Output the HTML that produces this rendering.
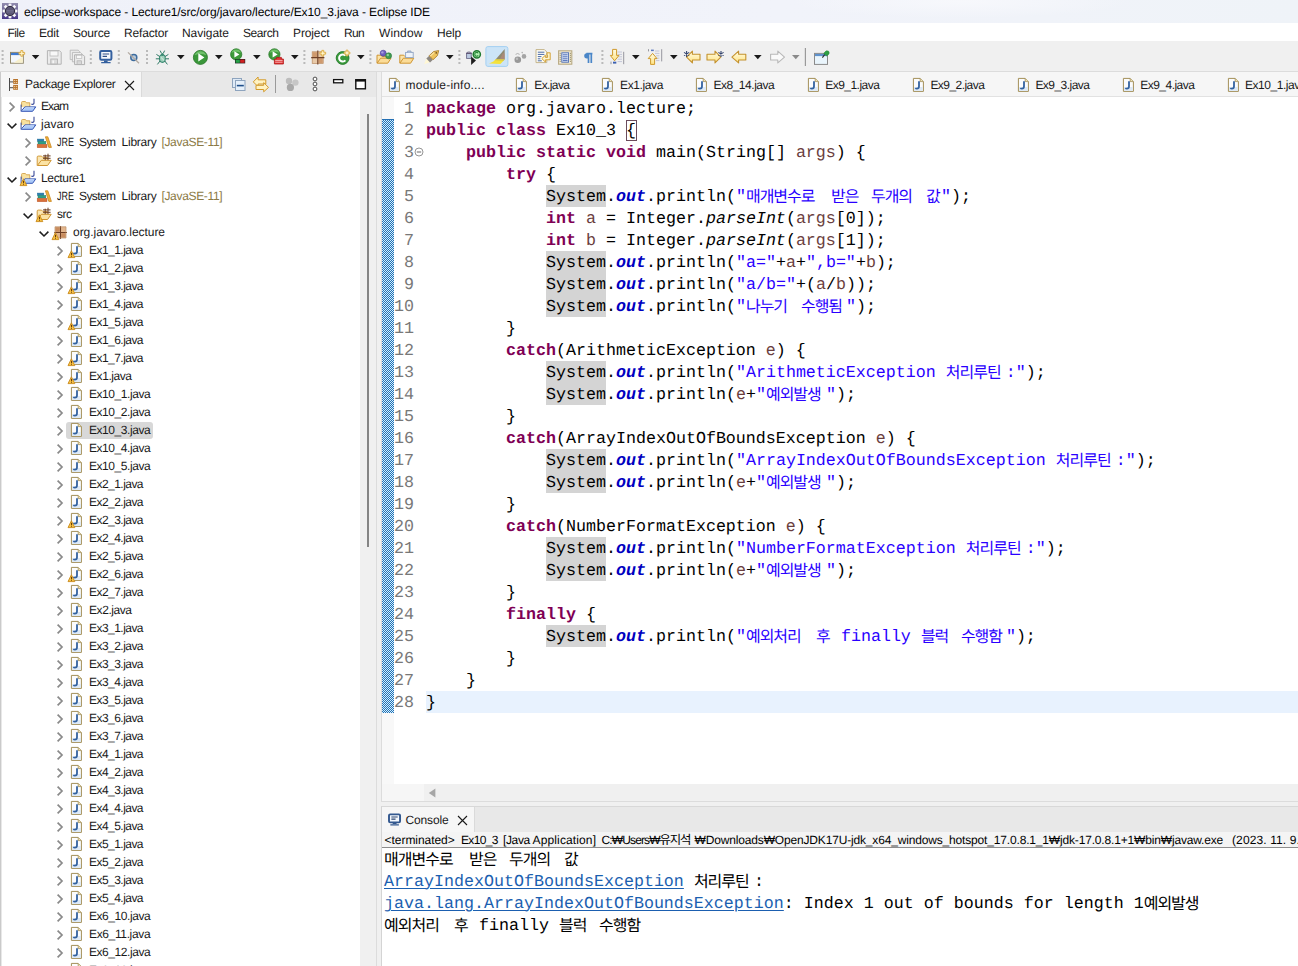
<!DOCTYPE html><html lang="ko"><head><meta charset="utf-8"><title>eclipse-workspace - Lecture1/src/org/javaro/lecture/Ex10_3.java - Eclipse IDE</title><style>
*{box-sizing:border-box}
html,body{margin:0;padding:0}
body{width:1298px;height:966px;overflow:hidden;position:relative;background:#f0f0f0;font-family:"Liberation Sans",sans-serif;font-size:12px;color:#1a1a1a;text-rendering:geometricPrecision}
.abs{position:absolute}
.t{position:absolute;white-space:pre;line-height:16px;height:16px}
#title{left:0;top:0;width:1298px;height:23px;background:radial-gradient(ellipse 170px 16px at 960px 2px,#f7f8fc 0,rgba(247,248,252,0) 100%),linear-gradient(90deg,#eff1f9 0,#f1f3fa 60%,#eff3f8 100%)}
#menu{left:0;top:23px;width:1298px;height:18px;background:#fff}
#tool{left:0;top:41px;width:1298px;height:30px;background:#f0f0f0}
#tree{left:2px;top:97px;width:358px;height:869px;background:#fff;overflow:hidden}
.row{position:absolute;left:0;height:18px;width:358px}
.row .t{top:1px}
.q{color:#8b7a45}
#code{left:382px;top:97px;width:916px;height:687px;background:#fff;overflow:hidden}
.ln,.cl{position:absolute;margin-top:2px;height:22px;line-height:22px;white-space:pre;font-family:"Liberation Mono",monospace;font-size:16.66px;color:#000}
.ln{left:0;width:32px;text-align:right;color:#787878}
.cl{left:44px}
.cl span,.ln span{line-height:22px}
.kw{color:#7f0055;font-weight:bold}
.st{color:#2a00ff}
.fd{color:#0000c0;font-weight:bold;font-style:italic}
.it{font-style:italic}
.lv{color:#6a3e3e}
.oc{}
.kr{display:inline-block;vertical-align:top;white-space:nowrap;font-family:"Liberation Mono","Noto Sans CJK KR",monospace;font-size:16px;letter-spacing:-1px;line-height:22px;height:22px;font-style:normal;font-weight:normal}
.kr2{display:inline-block;vertical-align:top;white-space:nowrap;font-family:"Liberation Sans","Noto Sans CJK KR",sans-serif;font-size:12.4px;letter-spacing:-1.2px;line-height:16px;height:16px}
#con{left:382px;top:848px;width:916px;height:118px;background:#fff;overflow:hidden}
.co{position:absolute;left:2px;margin-top:0.6px;height:22px;line-height:22px;white-space:pre;font-family:"Liberation Mono",monospace;font-size:16.66px;color:#000}
.lk{color:#1b5fb0;text-decoration:underline;text-decoration-thickness:1px;text-underline-offset:2px}
</style></head><body><div id="title" class="abs"><svg style="overflow:visible;position:absolute;left:2px;top:3px;" width="16" height="16" viewBox="0 0 16 16"><defs><linearGradient id="eg" x1="0" y1="0" x2="0" y2="1"><stop offset="0" stop-color="#908bad"/><stop offset="0.6" stop-color="#6a6296"/><stop offset="1" stop-color="#45358a"/></linearGradient></defs>
<rect x="0" y="0" width="16" height="16" fill="url(#eg)"/>
<g fill="#fbfbfd"><circle cx="8" cy="8" r="5.4"/>
<rect x="6.6" y="0.6" width="2.8" height="14.8"/><rect x="0.6" y="6.6" width="14.8" height="2.8"/>
<rect x="6.6" y="0.6" width="2.8" height="14.8" transform="rotate(45 8 8)"/><rect x="6.6" y="0.6" width="2.8" height="14.8" transform="rotate(-45 8 8)"/>
</g>
<circle cx="8" cy="8" r="4.7" fill="#5a5674" stroke="#262238" stroke-width="1"/><path d="M4.4 7.6 h7.2 M4.4 9 h7.2" stroke="#7a7696" stroke-width="0.8"/></svg><div class="t" style="left:24px;top:4px;letter-spacing:-0.098px;color:#000">eclipse-workspace - Lecture1/src/org/javaro/lecture/Ex10_3.java - Eclipse IDE</div></div><div id="menu" class="abs"><div class="t" style="left:7.4px;top:2px;letter-spacing:-0.534px">File</div><div class="t" style="left:39px;top:2px;letter-spacing:-0.17px">Edit</div><div class="t" style="left:73px;top:2px;letter-spacing:-0.17px">Source</div><div class="t" style="left:124px;top:2px;letter-spacing:-0.169px">Refactor</div><div class="t" style="left:182px;top:2px;letter-spacing:-0.045px">Navigate</div><div class="t" style="left:243px;top:2px;letter-spacing:-0.42px">Search</div><div class="t" style="left:293px;top:2px;letter-spacing:-0.121px">Project</div><div class="t" style="left:344px;top:2px;letter-spacing:-0.671px">Run</div><div class="t" style="left:379px;top:2px;letter-spacing:0.137px">Window</div><div class="t" style="left:437px;top:2px;letter-spacing:-0.17px">Help</div></div><div id="tool" class="abs"></div><svg style="position:absolute;left:0;top:41px" width="1298" height="30" viewBox="0 0 1298 30"><defs><linearGradient id="ya" x1="0" y1="0" x2="0" y2="1"><stop offset="0" stop-color="#fffce6"/><stop offset="1" stop-color="#ffe382"/></linearGradient></defs><rect x="1.6" y="9" width="2" height="2" fill="#bababa"/><rect x="1.6" y="13" width="2" height="2" fill="#bababa"/><rect x="1.6" y="17" width="2" height="2" fill="#bababa"/><rect x="1.6" y="21" width="2" height="2" fill="#bababa"/><g transform="translate(9.6 9)"><rect x="0.9" y="2.4" width="12.8" height="10.8" fill="#f4f7fb" stroke="#8f8568" stroke-width="1"/>
<rect x="1.4" y="2.9" width="11.8" height="2.2" fill="#3f7ad0"/>
<path d="M4 12.8 L13.2 12.8 L13.2 6.4 Z" fill="#f8f0cc"/><path d="M13.15 0.55 v1.9 h1.9 v1.9 h-1.9 v1.9 h-1.9 v-1.9 h-1.9 v-1.9 h1.9 v-1.9z" fill="#fff6cc" stroke="#dca93c" stroke-width="0.9" stroke-linejoin="round"/></g><path d="M31.8 14 h7.6 l-3.8 4.2z" fill="#1a1a1a"/><g transform="translate(46.4 8.4)"><path d="M1 1.2 h12 l1.8 1.8 v11.8 h-13.8z" fill="#ececec" stroke="#b4b4b4" stroke-width="1"/>
<rect x="3.6" y="1.6" width="8" height="5" fill="#f8f8f8" stroke="#b9b9b9" stroke-width="0.8"/>
<rect x="4.4" y="9.6" width="6.6" height="5" fill="#dcdcdc" stroke="#b0b0b0" stroke-width="0.8"/><rect x="6" y="11" width="1.6" height="2.8" fill="#f6f6f6"/></g><g transform="translate(69.4 8.4)"><path d="M0.8 0.8 h8 l1.4 1.4 v8 h-9.4z" fill="#eee" stroke="#b8b8b8" stroke-width="0.9"/>
<path d="M3 3 h8 l1.4 1.4 v8 h-9.4z" fill="#eee" stroke="#b8b8b8" stroke-width="0.9"/>
<path d="M5.2 5.4 h8.4 l1.6 1.6 v8.2 h-10z" fill="#ececec" stroke="#b0b0b0" stroke-width="1"/>
<rect x="7" y="5.8" width="5.4" height="3.2" fill="#f8f8f8" stroke="#bbb" stroke-width="0.7"/><rect x="7.6" y="11.4" width="4.6" height="3.6" fill="#d8d8d8" stroke="#b0b0b0" stroke-width="0.7"/></g><rect x="89.8" y="9" width="2" height="2" fill="#bababa"/><rect x="89.8" y="13" width="2" height="2" fill="#bababa"/><rect x="89.8" y="17" width="2" height="2" fill="#bababa"/><rect x="89.8" y="21" width="2" height="2" fill="#bababa"/><g transform="translate(98 9)"><g transform="translate(0.8 0)"><rect x="1.4" y="1" width="11.2" height="8.8" rx="1.2" fill="#f6f9fd" stroke="#34609f" stroke-width="2"/>
<path d="M3.8 4 h6.6 M3.8 6.4 h4.4" stroke="#2f4f86" stroke-width="1.2"/>
<path d="M5.2 10.4 h3.6 v1.6 h-3.6z M2.4 12 h9.4 v1.3 h-9.4z" fill="#34609f"/></g></g><rect x="117.8" y="9" width="2" height="2" fill="#bababa"/><rect x="117.8" y="13" width="2" height="2" fill="#bababa"/><rect x="117.8" y="17" width="2" height="2" fill="#bababa"/><rect x="117.8" y="21" width="2" height="2" fill="#bababa"/><g transform="translate(126 9)"><circle cx="7.8" cy="7.6" r="3" fill="#b9cbdd" stroke="#3d6c9e" stroke-width="1.5"/>
<path d="M2 2.4 L13 13.2" stroke="#b3aaa2" stroke-width="1.3"/></g><rect x="146" y="9" width="2" height="2" fill="#bababa"/><rect x="146" y="13" width="2" height="2" fill="#bababa"/><rect x="146" y="17" width="2" height="2" fill="#bababa"/><rect x="146" y="21" width="2" height="2" fill="#bababa"/><g transform="translate(154.4 9)"><ellipse cx="8" cy="8.6" rx="2.9" ry="3.8" fill="#9fd0bb" stroke="#3a8a72" stroke-width="1.1"/>
<path d="M6.2 7 L9.6 10.4" stroke="#d8efe4" stroke-width="1"/>
<circle cx="8" cy="4.4" r="1.5" fill="#3a8a72"/>
<path d="M5.4 6.6 L2 4.4 M10.6 6.6 L14 4.4 M5 8.8 H1.4 M11 8.8 H14.6 M5.6 11 L3 14.4 M10.4 11 L13 14.4 M7 3.2 L5.8 0.6 M9 3.2 L10.2 0.6" stroke="#2f7a66" stroke-width="1" fill="none"/></g><path d="M177 14 h7.6 l-3.8 4.2z" fill="#1a1a1a"/><g transform="translate(192.4 9)"><g transform="translate(0 -0.6)"><circle cx="8" cy="8" r="7" fill="#3a973a" stroke="#2c7c2c" stroke-width="0.9"/>
<path d="M8 1.8 a6.2 6.2 0 0 1 5.8 4 q-5.8 -2.2 -11.6 0 a6.2 6.2 0 0 1 5.8 -4z" fill="#86d280" opacity="0.7"/>
<path d="M5.9 3.9 L12 8 L5.9 12.1Z" fill="#fff"/></g></g><path d="M215 14 h7.6 l-3.8 4.2z" fill="#1a1a1a"/><g transform="translate(229.6 7.4)"><circle cx="6.6" cy="6" r="5.6" fill="#3d9a3a" stroke="#2a7a2a" stroke-width="0.8"/>
<path d="M6.6 1 a5 5 0 0 1 4.7 3.3 q-4.7 -1.8 -9.4 0 a5 5 0 0 1 4.7 -3.3z" fill="#7fcf78" opacity="0.75"/>
<path d="M4.8 2.8 L9.8 6 L4.8 9.2Z" fill="#fff"/>
<rect x="5.4" y="10.6" width="10.2" height="4.4" fill="#1f1f1f"/><rect x="6" y="11.2" width="4.2" height="3.2" fill="#25a045"/><rect x="10.6" y="11.2" width="4.4" height="3.2" fill="#d02020"/></g><path d="M253 14 h7.6 l-3.8 4.2z" fill="#1a1a1a"/><g transform="translate(267.8 7.4)"><circle cx="6.6" cy="6" r="5.6" fill="#3d9a3a" stroke="#2a7a2a" stroke-width="0.8"/>
<path d="M6.6 1 a5 5 0 0 1 4.7 3.3 q-4.7 -1.8 -9.4 0 a5 5 0 0 1 4.7 -3.3z" fill="#7fcf78" opacity="0.75"/>
<path d="M4.8 2.8 L9.8 6 L4.8 9.2Z" fill="#fff"/>
<path d="M8.6 9 h5 v1.6 h2 v5 h-9 v-5 h2z" fill="#e03030" stroke="#b01818" stroke-width="0.8"/><path d="M7.4 12 h7.4 M7.4 13.8 h7.4" stroke="#fbd0d0" stroke-width="0.8"/></g><path d="M291 14 h7.6 l-3.8 4.2z" fill="#1a1a1a"/><rect x="303.4" y="9" width="2" height="2" fill="#bababa"/><rect x="303.4" y="13" width="2" height="2" fill="#bababa"/><rect x="303.4" y="17" width="2" height="2" fill="#bababa"/><rect x="303.4" y="21" width="2" height="2" fill="#bababa"/><g transform="translate(310.8 7.8)"><rect x="1.4" y="3" width="11" height="11.6" fill="#e8c9a8" stroke="#b98a60" stroke-width="0.7"/>
<rect x="1.8" y="3.4" width="4.6" height="4.8" fill="#cf9a6e"/><rect x="7.6" y="9.4" width="4.4" height="4.8" fill="#cf9a6e"/>
<path d="M7 1.6 V15.6 M0.4 8.8 H13.6" stroke="#6e3f25" stroke-width="1.1"/>
<path d="M12.95 1.55 v1.9 h1.9 v1.9 h-1.9 v1.9 h-1.9 v-1.9 h-1.9 v-1.9 h1.9 v-1.9z" fill="#fff6cc" stroke="#dca93c" stroke-width="0.9" stroke-linejoin="round"/></g><g transform="translate(335.6 8)"><circle cx="7" cy="9" r="6.4" fill="#3a9a3c" stroke="#267a2a" stroke-width="0.9"/>
<path d="M9.8 6.6 a3.6 3.6 0 1 0 0 4.8" fill="none" stroke="#fff" stroke-width="2"/>
<path d="M12.35 1.15 v1.9 h1.9 v1.9 h-1.9 v1.9 h-1.9 v-1.9 h-1.9 v-1.9 h1.9 v-1.9z" fill="#fff6cc" stroke="#dca93c" stroke-width="0.9" stroke-linejoin="round"/></g><path d="M357 14 h7.6 l-3.8 4.2z" fill="#1a1a1a"/><rect x="369.4" y="9" width="2" height="2" fill="#bababa"/><rect x="369.4" y="13" width="2" height="2" fill="#bababa"/><rect x="369.4" y="17" width="2" height="2" fill="#bababa"/><rect x="369.4" y="21" width="2" height="2" fill="#bababa"/><g transform="translate(376.2 7.8)"><path d="M0.8 14.2 V6.4 h4 l1.2 1.4 h6 v2" fill="#fbe3a8" stroke="#cf9532" stroke-width="1" stroke-linejoin="round"/>
<path d="M0.9 14.4 L4.4 9.4 H14.8 L11.6 14.4 Z" fill="#fbdc98" stroke="#cf9532" stroke-width="1" stroke-linejoin="round"/>
<circle cx="7" cy="4.4" r="3" fill="#6f5fc0" stroke="#4a3f9a" stroke-width="0.6"/><circle cx="6.2" cy="3.6" r="1.2" fill="#a79fe0"/>
<circle cx="12.4" cy="7" r="3" fill="#3f9a52" stroke="#2a7a3a" stroke-width="0.6"/><circle cx="11.6" cy="6.2" r="1.2" fill="#8fd09a"/></g><g transform="translate(399 7.8)"><path d="M0.8 14.2 V6.4 h4 l1.2 1.4 h6 v2" fill="#fbe3a8" stroke="#cf9532" stroke-width="1" stroke-linejoin="round"/>
<path d="M0.9 14.4 L4.4 9.4 H14.8 L11.6 14.4 Z" fill="#fbdc98" stroke="#cf9532" stroke-width="1" stroke-linejoin="round"/>
<rect x="6.6" y="3.6" width="7.6" height="5.2" fill="#eef3f9" stroke="#8fa4c4" stroke-width="0.9"/><path d="M8.6 3.6 v-1.4 h3.4 v1.4" fill="#b9c8dc" stroke="#8fa4c4" stroke-width="0.9"/></g><g transform="translate(423.4 8.4)"><g transform="rotate(-43 8 8)"><path d="M-2 8 L3.6 5.4 V10.6 Z" fill="#fff7d4"/>
<rect x="3.6" y="5.3" width="4" height="5.4" fill="#8d8882"/>
<path d="M7.6 5.2 H13.6 L18 8 L13.6 10.8 H7.6Z" fill="#efc45e" stroke="#a87c2c" stroke-width="0.8" stroke-linejoin="round"/>
<path d="M8 6.2 H13.2" stroke="#fbe7b0" stroke-width="1"/><circle cx="14.6" cy="8" r="0.8" fill="#6a4a1a"/></g></g><path d="M446 14 h7.6 l-3.8 4.2z" fill="#1a1a1a"/><rect x="458.4" y="9" width="2" height="2" fill="#bababa"/><rect x="458.4" y="13" width="2" height="2" fill="#bababa"/><rect x="458.4" y="17" width="2" height="2" fill="#bababa"/><rect x="458.4" y="21" width="2" height="2" fill="#bababa"/><g transform="translate(465.6 9)"><rect x="1" y="3.4" width="4.6" height="5" fill="#bccbe2" stroke="#6a6a8a" stroke-width="0.9"/><path d="M0.4 3.2 h6" stroke="#5a4a6a" stroke-width="1"/><path d="M2 3 v-1 h2.6 v1" fill="none" stroke="#6a6a8a" stroke-width="0.8"/>
<path d="M5.5 6.4 V15 L10.4 10.6Z" fill="#1e1e1e"/>
<circle cx="11.2" cy="4.3" r="3.6" fill="#b4f0b4" stroke="#1f7a30" stroke-width="1.5"/><path d="M12.6 3.2 a1.9 1.9 0 1 0 0 2.2" fill="none" stroke="#2a8a3a" stroke-width="1.1"/></g><rect x="485.9" y="5.6" width="22" height="19.8" rx="2" fill="#cce4f7" stroke="#a4d0f2" stroke-width="1"/><g transform="translate(489.4 9)"><path d="M15.3 -1 V9.6 L6.4 9.2 Z" fill="#8f8a72"/><path d="M13.6 3 L15.3 3.6 V9.4 L10.4 9.3Z" fill="#b58a7a" opacity="0.7"/>
<path d="M6.6 9 L15.3 9.4 L11 14 L-0.4 13.4 L4 11.4 Z" fill="#f4e23c"/><path d="M6.6 9 L15.3 9.4 L14.2 10.8 L5.4 10.2Z" fill="#c8b848" opacity="0.7"/></g><g transform="translate(512.6 9)"><circle cx="5.2" cy="9.8" r="3.3" fill="#989898"/><circle cx="4.4" cy="8.8" r="1.2" fill="#bcbcbc"/>
<circle cx="11.4" cy="6.4" r="2.3" fill="#a4a4a4"/><path d="M3 4.4 q2 -1.8 4 0" fill="none" stroke="#aaa" stroke-width="0.9"/><circle cx="9.6" cy="2.6" r="0.8" fill="#b0b0b0"/></g><g transform="translate(535 9)"><g transform="translate(0 -1.2)"><path d="M1 0.8 h8.4 l2.4 2.4 v10.6 h-10.8z" fill="#fdfcf4" stroke="#c4b48a" stroke-width="1"/>
<path d="M2.8 3.4 h6.6 M2.8 5.6 h6.6 M2.8 7.8 h3.6 M2.8 10 h2.6 M2.8 12 h4" stroke="#4a6aa8" stroke-width="1"/>
<path d="M12 4 h3.2 v7 h-4.8 v2.2 l-3.6 -3.4 3.6 -3.4 v2.2 h2.2 v-2.2 h-0.6z" fill="#fdf4cf" stroke="#d09a26" stroke-width="0.9" stroke-linejoin="round"/></g></g><g transform="translate(557.6 9)"><rect x="1" y="0.8" width="13.2" height="13.4" fill="#f4ecd4" stroke="#b8aa84" stroke-width="1.1"/>
<rect x="4.2" y="2.8" width="6.8" height="9.4" fill="#e4ecf8" stroke="#4a6ab0" stroke-width="0.9"/>
<path d="M5.2 4.8 h4.8 M5.2 6.8 h4.8 M5.2 8.8 h4.8 M5.2 10.6 h4.8" stroke="#3f62b0" stroke-width="0.9"/>
<path d="M2.6 2.8 v9.6 M12.8 2.8 v9.6" stroke="#7a6f4a" stroke-width="0.9" stroke-dasharray="1 1"/></g><g transform="translate(580.4 9)"><path d="M6 3.6 H12 M8.1 3.6 V13 M10.9 3.6 V13" stroke="#4a86c8" stroke-width="1.7" fill="none"/><path d="M8.2 3.2 h-1.8 a2.6 2.6 0 0 0 0 5.2 h1.8z" fill="#4a86c8"/></g><rect x="601.4" y="9" width="2" height="2" fill="#bababa"/><rect x="601.4" y="13" width="2" height="2" fill="#bababa"/><rect x="601.4" y="17" width="2" height="2" fill="#bababa"/><rect x="601.4" y="21" width="2" height="2" fill="#bababa"/><g transform="translate(609 9)"><path d="M8.6 2 h4.4 M8.6 4.4 h4.4 M8.6 6.8 h4.4 M8.6 9.2 h4.4 M8.6 11.6 h4.4" stroke="#c4c6d8" stroke-width="1" fill="none"/>
<path d="M14.7 1.8 V14.2 M2 11.6 V14.2" stroke="#8c8c96" stroke-width="0.9"/>
<path d="M3.6 -0.6 h4 v6 h2.4 L5.6 10.8 L1.3 5.4 h2.3z" fill="url(#ya)" stroke="#cf9a2c" stroke-width="1" stroke-linejoin="round"/>
<rect x="4" y="11.7" width="3.3" height="1.9" fill="#3a5fb0"/></g><path d="M632 14 h7.6 l-3.8 4.2z" fill="#1a1a1a"/><g transform="translate(647.4 9)"><path d="M7.6 1 h4.4 M7.6 3.4 h4.4 M8.6 5.8 h3.4 M9.4 8.2 h2.6 M8.6 10.6 h3.4" stroke="#c4c6d8" stroke-width="1" fill="none"/>
<path d="M14.3 -0.8 V11.4 M1.1 -0.8 V1.4" stroke="#8c8c96" stroke-width="0.9"/>
<rect x="3.6" y="-0.4" width="2.8" height="1.5" fill="#5a78c0"/>
<path d="M3.2 14.4 h4 v-5.8 h2.4 L5.2 3.4 L0.8 8.6 h2.4z" fill="url(#ya)" stroke="#cf9a2c" stroke-width="1" stroke-linejoin="round"/></g><path d="M670 14 h7.6 l-3.8 4.2z" fill="#1a1a1a"/><g transform="translate(684 9)"><path d="M16 4.2 v5.8 h-7.6 v2.9 L2.6 7.1 L8.4 1.2 v3z" fill="url(#ya)" stroke="#c4922e" stroke-width="1.1" stroke-linejoin="round"/><path d="M2.6 1 v6 M0 2.4 l5.2 3.2 M5.2 2.4 l-5.2 3.2" stroke="#35456e" stroke-width="1.1"/></g><g transform="translate(707.4 9)"><path d="M-0.4 4.2 v5.8 h8 v2.9 L13.4 7.1 L7.6 1.2 v3z" fill="url(#ya)" stroke="#c4922e" stroke-width="1.1" stroke-linejoin="round"/><path d="M13.6 1 v6 M11 2.4 l5.2 3.2 M16.2 2.4 l-5.2 3.2" stroke="#35456e" stroke-width="1.1"/></g><g transform="translate(731 9)"><path d="M14.8 4.2 v5.8 h-7.2 v2.9 L0.9 7.1 L7.6 1.2 v3z" fill="url(#ya)" stroke="#c4922e" stroke-width="1.1" stroke-linejoin="round"/></g><path d="M754 14 h7.6 l-3.8 4.2z" fill="#1a1a1a"/><g transform="translate(769.4 9)"><path d="M1.2 4.2 v5.8 h7.2 v2.9 L15.1 7.1 L8.4 1.2 v3z" fill="#fafafa" stroke="#b8b8b8" stroke-width="1.1" stroke-linejoin="round"/></g><path d="M792 14 h7.6 l-3.8 4.2z" fill="#8a8a8a"/><rect x="804.8" y="7" width="1.2" height="18" fill="#9a9a9a"/><g transform="translate(814 9)"><rect x="0.5" y="3.4" width="13" height="11" fill="#eaf5fc" stroke="#8a8a8a" stroke-width="1"/>
<rect x="1" y="3.9" width="12" height="2.2" fill="#5f92cc"/>
<path d="M10.4 2.6 q1.8 -3 4.2 -1.4 q1.6 1.8 -0.8 4 l-1.4 0.6 l-2.6 -2z" fill="#2fa044" stroke="#1f8030" stroke-width="0.5"/>
<path d="M10.6 4.6 L8.4 7.6" stroke="#2a2a2a" stroke-width="1.1"/></g></svg><div class="abs" style="left:0;top:71px;width:1298px;height:1px;background:#dcdcdc"></div><div class="abs" style="left:0;top:72px;width:377px;height:894px;background:#e8e8e8;border-left:1px solid #cacaca;border-right:1px solid #dcdcdc"></div><div class="abs" style="left:1px;top:72px;width:141px;height:25px;background:#f6f6f6;border-right:1px solid #dadada"></div><svg style="overflow:visible;position:absolute;left:7px;top:77px;" width="16" height="16" viewBox="0 0 16 16"><path d="M2.5 1 V14 M3 4.9 H6.4 M3 10.7 H6.4" stroke="#4a4a4a" stroke-width="1" fill="none"/>
<rect x="6.2" y="2" width="4.8" height="4.9" fill="#b8742c"/><rect x="6.2" y="7.9" width="4.8" height="4.9" fill="#b8742c"/>
<g fill="#f6dcb8"><rect x="7.2" y="3" width="1" height="1"/><rect x="9.2" y="3" width="1" height="1"/><rect x="7.2" y="5" width="1" height="1"/><rect x="9.2" y="5" width="1" height="1"/>
<rect x="7.2" y="8.9" width="1" height="1"/><rect x="9.2" y="8.9" width="1" height="1"/><rect x="7.2" y="10.9" width="1" height="1"/><rect x="9.2" y="10.9" width="1" height="1"/></g></svg><div class="t" style="left:25px;top:76px;letter-spacing:-0.257px">Package Explorer</div><svg style="position:absolute;left:124px;top:80px" width="11" height="11" viewBox="0 0 11 11"><path d="M1 1 L10 10 M10 1 L1 10" stroke="#1a1a1a" stroke-width="1.1"/></svg><svg class="abs" style="left:228px;top:72px" width="145" height="24" viewBox="0 0 145 24">
<rect x="4.5" y="6.5" width="9" height="9" fill="#dfeaf6" stroke="#8ea4be"/><rect x="7.5" y="8.5" width="9.5" height="10" fill="#e6f0fa" stroke="#8ea4be"/><path d="M8.8 13.6 h7" stroke="#1f4f8a" stroke-width="1.6"/>
<path d="M37.8 7.8 H30.1 V5 L25.3 9.9 L30.1 14.7 V12 H37.8Z" fill="#fff3c4" stroke="#d39a2a" stroke-width="1" stroke-linejoin="round"/>
<path d="M28 13.3 H35.7 V10.6 L40.5 15.4 L35.7 19.8 V17.5 H28Z" fill="#fff3c4" stroke="#d39a2a" stroke-width="1" stroke-linejoin="round"/>
<rect x="47" y="3" width="1" height="18" fill="#9a9a9a"/>
<circle cx="61" cy="9" r="3.2" fill="#bdbdbd"/><circle cx="67.4" cy="10.6" r="3.2" fill="#c6c6c6"/><circle cx="62.4" cy="15.4" r="3.6" fill="#a8a8a8"/>
<circle cx="87" cy="7" r="1.9" fill="#fff" stroke="#3a3a3a" stroke-width="0.9"/><circle cx="87" cy="12" r="1.9" fill="#fff" stroke="#3a3a3a" stroke-width="0.9"/><circle cx="87" cy="17" r="1.9" fill="#fff" stroke="#3a3a3a" stroke-width="0.9"/>
<rect x="105.6" y="7.6" width="9.2" height="3.2" fill="#fff" stroke="#111" stroke-width="1.3"/>
<rect x="127.8" y="7.8" width="9.6" height="9" fill="#fff" stroke="#111" stroke-width="1.4"/><rect x="127.2" y="7.2" width="10.8" height="2.4" fill="#111"/>
</svg><div id="tree" class="abs"><div class="row" style="top:0px"><svg style="position:absolute;left:6px;top:4px" width="8" height="12" viewBox="0 0 8 12"><path d="M1.6 1.6 L6 6 L1.6 10.4" fill="none" stroke="#8a8a8a" stroke-width="1.7"/></svg><svg style="overflow:visible;position:absolute;left:18px;top:1px;" width="16" height="16" viewBox="0 0 16 16"><path d="M1.6 9 V4.4 q0-0.9 0.9-0.9 h2.9 l1 1.3 h3.4 v4.2" fill="#f9e2a0" stroke="#d2a24a" stroke-width="0.9" stroke-linejoin="round"/>
<path d="M1.1 6.6 v6.6" stroke="#3b4f9b" stroke-width="1"/>
<path d="M1.2 13.3 L4.8 8.9 H15.8 L12.6 13.3 Z" fill="#a9c8f8" stroke="#3454b4" stroke-width="1" stroke-linejoin="round"/>
<path d="M2.8 12.5 L5.4 9.7 H14" fill="none" stroke="#d4e4fc" stroke-width="0.8"/>
<path d="M14 0.8 v4 q0 1.6 -1.4 1.6 q-0.8 0 -1.2 -0.5" fill="none" stroke="#3a4a98" stroke-width="1.1"/></svg><div class="t" style="left:39px;letter-spacing:-0.919px">Exam</div></div><div class="row" style="top:18px"><svg style="position:absolute;left:3.5px;top:6.5px" width="12" height="8" viewBox="0 0 12 8"><path d="M1.6 1.6 L6 6 L10.4 1.6" fill="none" stroke="#1e1e1e" stroke-width="1.5"/></svg><svg style="overflow:visible;position:absolute;left:18px;top:1px;" width="16" height="16" viewBox="0 0 16 16"><path d="M1.6 9 V4.4 q0-0.9 0.9-0.9 h2.9 l1 1.3 h3.4 v4.2" fill="#f9e2a0" stroke="#d2a24a" stroke-width="0.9" stroke-linejoin="round"/>
<path d="M1.1 6.6 v6.6" stroke="#3b4f9b" stroke-width="1"/>
<path d="M1.2 13.3 L4.8 8.9 H15.8 L12.6 13.3 Z" fill="#a9c8f8" stroke="#3454b4" stroke-width="1" stroke-linejoin="round"/>
<path d="M2.8 12.5 L5.4 9.7 H14" fill="none" stroke="#d4e4fc" stroke-width="0.8"/>
<path d="M14 0.8 v4 q0 1.6 -1.4 1.6 q-0.8 0 -1.2 -0.5" fill="none" stroke="#3a4a98" stroke-width="1.1"/></svg><div class="t" style="left:39px;letter-spacing:0.053px">javaro</div></div><div class="row" style="top:36px"><svg style="position:absolute;left:22px;top:4px" width="8" height="12" viewBox="0 0 8 12"><path d="M1.6 1.6 L6 6 L1.6 10.4" fill="none" stroke="#8a8a8a" stroke-width="1.7"/></svg><svg style="overflow:visible;position:absolute;left:34px;top:1px;" width="16" height="16" viewBox="0 0 16 16"><rect x="1.4" y="5.1" width="6.4" height="2.3" fill="#2a7fb0" stroke="#1f6a99" stroke-width="0.5"/>
<rect x="2" y="7.4" width="7.8" height="2.7" fill="#2f9e86" stroke="#23806b" stroke-width="0.5"/>
<rect x="1.2" y="10.4" width="9.8" height="3.3" fill="#d9703a" stroke="#b9562a" stroke-width="0.5"/>
<path d="M9.4 2.8 h2.4 l3.6 10.6 h-2.6 z" fill="#f0b13c" stroke="#c98520" stroke-width="0.8" stroke-linejoin="round"/></svg><div class="t" style="left:55px;transform-origin:0 0;transform:scaleX(0.750)">JRE</div><div class="t" style="left:77px;letter-spacing:-0.585px">System</div><div class="t" style="left:119.6px;letter-spacing:-0.269px">Library</div><div class="t q" style="left:159.4px;letter-spacing:-0.316px">[JavaSE-11]</div></div><div class="row" style="top:54px"><svg style="position:absolute;left:22px;top:4px" width="8" height="12" viewBox="0 0 8 12"><path d="M1.6 1.6 L6 6 L1.6 10.4" fill="none" stroke="#8a8a8a" stroke-width="1.7"/></svg><svg style="overflow:visible;position:absolute;left:34px;top:1px;" width="16" height="16" viewBox="0 0 16 16"><g transform="translate(0 0.3)"><path d="M1.2 13 V4.8 q0-1 1-1 h3.4 l1.2 1.3 h4.4 v2" fill="#fbe7b3" stroke="#d29a3a" stroke-width="1" stroke-linejoin="round"/>
<path d="M1.3 13.2 L5.4 8 H15.2 L11.6 13.2 Z" fill="#fbe3a4" stroke="#cf9532" stroke-width="1" stroke-linejoin="round"/>
<path d="M7 3.6 h7.6 M7 6 h7.6 M9.2 2.4 v5.4 M12 1.4 v6.4" stroke="#6a3e22" stroke-width="1" fill="none"/></g></svg><div class="t" style="left:55px;letter-spacing:-0.499px">src</div></div><div class="row" style="top:72px"><svg style="position:absolute;left:3.5px;top:6.5px" width="12" height="8" viewBox="0 0 12 8"><path d="M1.6 1.6 L6 6 L10.4 1.6" fill="none" stroke="#1e1e1e" stroke-width="1.5"/></svg><svg style="overflow:visible;position:absolute;left:18px;top:1px;" width="16" height="16" viewBox="0 0 16 16"><path d="M1.6 9 V4.4 q0-0.9 0.9-0.9 h2.9 l1 1.3 h3.4 v4.2" fill="#f9e2a0" stroke="#d2a24a" stroke-width="0.9" stroke-linejoin="round"/>
<path d="M1.1 6.6 v6.6" stroke="#3b4f9b" stroke-width="1"/>
<path d="M1.2 13.3 L4.8 8.9 H15.8 L12.6 13.3 Z" fill="#a9c8f8" stroke="#3454b4" stroke-width="1" stroke-linejoin="round"/>
<path d="M2.8 12.5 L5.4 9.7 H14" fill="none" stroke="#d4e4fc" stroke-width="0.8"/>
<path d="M14 0.8 v4 q0 1.6 -1.4 1.6 q-0.8 0 -1.2 -0.5" fill="none" stroke="#3a4a98" stroke-width="1.1"/><path d="M3.2 8.6 L6.6 15.4 H-0.2 Z" transform="translate(0.2 0.2)" fill="#f7c244" stroke="#c98a1b" stroke-width="0.9" stroke-linejoin="round"/><rect x="3" y="10.8" width="0.9" height="2.4" fill="#5a3000"/><rect x="3" y="13.8" width="0.9" height="0.9" fill="#5a3000"/></svg><div class="t" style="left:39px;letter-spacing:-0.337px">Lecture1</div></div><div class="row" style="top:90px"><svg style="position:absolute;left:22px;top:4px" width="8" height="12" viewBox="0 0 8 12"><path d="M1.6 1.6 L6 6 L1.6 10.4" fill="none" stroke="#8a8a8a" stroke-width="1.7"/></svg><svg style="overflow:visible;position:absolute;left:34px;top:1px;" width="16" height="16" viewBox="0 0 16 16"><rect x="1.4" y="5.1" width="6.4" height="2.3" fill="#2a7fb0" stroke="#1f6a99" stroke-width="0.5"/>
<rect x="2" y="7.4" width="7.8" height="2.7" fill="#2f9e86" stroke="#23806b" stroke-width="0.5"/>
<rect x="1.2" y="10.4" width="9.8" height="3.3" fill="#d9703a" stroke="#b9562a" stroke-width="0.5"/>
<path d="M9.4 2.8 h2.4 l3.6 10.6 h-2.6 z" fill="#f0b13c" stroke="#c98520" stroke-width="0.8" stroke-linejoin="round"/></svg><div class="t" style="left:55px;transform-origin:0 0;transform:scaleX(0.750)">JRE</div><div class="t" style="left:77px;letter-spacing:-0.585px">System</div><div class="t" style="left:119.6px;letter-spacing:-0.269px">Library</div><div class="t q" style="left:159.4px;letter-spacing:-0.316px">[JavaSE-11]</div></div><div class="row" style="top:108px"><svg style="position:absolute;left:19.5px;top:6.5px" width="12" height="8" viewBox="0 0 12 8"><path d="M1.6 1.6 L6 6 L10.4 1.6" fill="none" stroke="#1e1e1e" stroke-width="1.5"/></svg><svg style="overflow:visible;position:absolute;left:34px;top:1px;" width="16" height="16" viewBox="0 0 16 16"><g transform="translate(0 0.3)"><path d="M1.2 13 V4.8 q0-1 1-1 h3.4 l1.2 1.3 h4.4 v2" fill="#fbe7b3" stroke="#d29a3a" stroke-width="1" stroke-linejoin="round"/>
<path d="M1.3 13.2 L5.4 8 H15.2 L11.6 13.2 Z" fill="#fbe3a4" stroke="#cf9532" stroke-width="1" stroke-linejoin="round"/>
<path d="M7 3.6 h7.6 M7 6 h7.6 M9.2 2.4 v5.4 M12 1.4 v6.4" stroke="#6a3e22" stroke-width="1" fill="none"/></g><path d="M3.2 8.6 L6.6 15.4 H-0.2 Z" transform="translate(0.2 0.2)" fill="#f7c244" stroke="#c98a1b" stroke-width="0.9" stroke-linejoin="round"/><rect x="3" y="10.8" width="0.9" height="2.4" fill="#5a3000"/><rect x="3" y="13.8" width="0.9" height="0.9" fill="#5a3000"/></svg><div class="t" style="left:55px;letter-spacing:-0.499px">src</div></div><div class="row" style="top:126px"><svg style="position:absolute;left:35.5px;top:6.5px" width="12" height="8" viewBox="0 0 12 8"><path d="M1.6 1.6 L6 6 L10.4 1.6" fill="none" stroke="#1e1e1e" stroke-width="1.5"/></svg><svg style="overflow:visible;position:absolute;left:50px;top:1px;" width="16" height="16" viewBox="0 0 16 16"><g transform="translate(0.2 0.8)"><rect x="2.8" y="2" width="11" height="11.2" fill="#e6c4a0"/>
<rect x="3.2" y="2.4" width="4.4" height="4.6" fill="#c98c5e"/><rect x="9" y="2.4" width="4.4" height="4.6" fill="#e3b58c"/>
<rect x="3.2" y="8.4" width="4.4" height="4.4" fill="#e3b58c"/><rect x="9" y="8.4" width="4.4" height="4.4" fill="#c98c5e"/>
<path d="M8.3 1.2 V14.2 M2 7.7 H14.8" stroke="#6e3f25" stroke-width="1.1"/>
<path d="M2.8 2 H13.8 V13.2 H2.8Z" fill="none" stroke="#b98a60" stroke-width="0.7"/></g><path d="M3.2 8.6 L6.6 15.4 H-0.2 Z" transform="translate(0.2 0.2)" fill="#f7c244" stroke="#c98a1b" stroke-width="0.9" stroke-linejoin="round"/><rect x="3" y="10.8" width="0.9" height="2.4" fill="#5a3000"/><rect x="3" y="13.8" width="0.9" height="0.9" fill="#5a3000"/></svg><div class="t" style="left:71px;letter-spacing:-0.04px">org.javaro.lecture</div></div><div class="row" style="top:144px"><svg style="position:absolute;left:54px;top:4px" width="8" height="12" viewBox="0 0 8 12"><path d="M1.6 1.6 L6 6 L1.6 10.4" fill="none" stroke="#8a8a8a" stroke-width="1.7"/></svg><svg style="overflow:visible;position:absolute;left:66px;top:1px;" width="16" height="16" viewBox="0 0 16 16"><path d="M3.4 1.4 h6.8 l3.2 3.2 v9.8 h-10z" fill="#fbfcfe" stroke="#a38f58" stroke-width="1" stroke-linejoin="round"/>
<path d="M4 10 h8.8 v3.9 h-8.8z" fill="#dde9f6"/>
<path d="M10.2 1.6 v3 h3" fill="#efe2b4" stroke="#a38f58" stroke-width="0.8"/>
<path d="M9 4.2 v5 q0 2.4 -2.2 2.4 q-0.9 0 -1.5 -0.5" fill="none" stroke="#33629f" stroke-width="1.8"/><path d="M3.2 8.6 L6.6 15.4 H-0.2 Z" transform="translate(0.2 0.2)" fill="#f7c244" stroke="#c98a1b" stroke-width="0.9" stroke-linejoin="round"/><rect x="3" y="10.8" width="0.9" height="2.4" fill="#5a3000"/><rect x="3" y="13.8" width="0.9" height="0.9" fill="#5a3000"/></svg><div class="t" style="left:87px;letter-spacing:-0.537px">Ex1_1.java</div></div><div class="row" style="top:162px"><svg style="position:absolute;left:54px;top:4px" width="8" height="12" viewBox="0 0 8 12"><path d="M1.6 1.6 L6 6 L1.6 10.4" fill="none" stroke="#8a8a8a" stroke-width="1.7"/></svg><svg style="overflow:visible;position:absolute;left:66px;top:1px;" width="16" height="16" viewBox="0 0 16 16"><path d="M3.4 1.4 h6.8 l3.2 3.2 v9.8 h-10z" fill="#fbfcfe" stroke="#a38f58" stroke-width="1" stroke-linejoin="round"/>
<path d="M4 10 h8.8 v3.9 h-8.8z" fill="#dde9f6"/>
<path d="M10.2 1.6 v3 h3" fill="#efe2b4" stroke="#a38f58" stroke-width="0.8"/>
<path d="M9 4.2 v5 q0 2.4 -2.2 2.4 q-0.9 0 -1.5 -0.5" fill="none" stroke="#33629f" stroke-width="1.8"/></svg><div class="t" style="left:87px;letter-spacing:-0.537px">Ex1_2.java</div></div><div class="row" style="top:180px"><svg style="position:absolute;left:54px;top:4px" width="8" height="12" viewBox="0 0 8 12"><path d="M1.6 1.6 L6 6 L1.6 10.4" fill="none" stroke="#8a8a8a" stroke-width="1.7"/></svg><svg style="overflow:visible;position:absolute;left:66px;top:1px;" width="16" height="16" viewBox="0 0 16 16"><path d="M3.4 1.4 h6.8 l3.2 3.2 v9.8 h-10z" fill="#fbfcfe" stroke="#a38f58" stroke-width="1" stroke-linejoin="round"/>
<path d="M4 10 h8.8 v3.9 h-8.8z" fill="#dde9f6"/>
<path d="M10.2 1.6 v3 h3" fill="#efe2b4" stroke="#a38f58" stroke-width="0.8"/>
<path d="M9 4.2 v5 q0 2.4 -2.2 2.4 q-0.9 0 -1.5 -0.5" fill="none" stroke="#33629f" stroke-width="1.8"/><path d="M3.2 8.6 L6.6 15.4 H-0.2 Z" transform="translate(0.2 0.2)" fill="#f7c244" stroke="#c98a1b" stroke-width="0.9" stroke-linejoin="round"/><rect x="3" y="10.8" width="0.9" height="2.4" fill="#5a3000"/><rect x="3" y="13.8" width="0.9" height="0.9" fill="#5a3000"/></svg><div class="t" style="left:87px;letter-spacing:-0.537px">Ex1_3.java</div></div><div class="row" style="top:198px"><svg style="position:absolute;left:54px;top:4px" width="8" height="12" viewBox="0 0 8 12"><path d="M1.6 1.6 L6 6 L1.6 10.4" fill="none" stroke="#8a8a8a" stroke-width="1.7"/></svg><svg style="overflow:visible;position:absolute;left:66px;top:1px;" width="16" height="16" viewBox="0 0 16 16"><path d="M3.4 1.4 h6.8 l3.2 3.2 v9.8 h-10z" fill="#fbfcfe" stroke="#a38f58" stroke-width="1" stroke-linejoin="round"/>
<path d="M4 10 h8.8 v3.9 h-8.8z" fill="#dde9f6"/>
<path d="M10.2 1.6 v3 h3" fill="#efe2b4" stroke="#a38f58" stroke-width="0.8"/>
<path d="M9 4.2 v5 q0 2.4 -2.2 2.4 q-0.9 0 -1.5 -0.5" fill="none" stroke="#33629f" stroke-width="1.8"/></svg><div class="t" style="left:87px;letter-spacing:-0.537px">Ex1_4.java</div></div><div class="row" style="top:216px"><svg style="position:absolute;left:54px;top:4px" width="8" height="12" viewBox="0 0 8 12"><path d="M1.6 1.6 L6 6 L1.6 10.4" fill="none" stroke="#8a8a8a" stroke-width="1.7"/></svg><svg style="overflow:visible;position:absolute;left:66px;top:1px;" width="16" height="16" viewBox="0 0 16 16"><path d="M3.4 1.4 h6.8 l3.2 3.2 v9.8 h-10z" fill="#fbfcfe" stroke="#a38f58" stroke-width="1" stroke-linejoin="round"/>
<path d="M4 10 h8.8 v3.9 h-8.8z" fill="#dde9f6"/>
<path d="M10.2 1.6 v3 h3" fill="#efe2b4" stroke="#a38f58" stroke-width="0.8"/>
<path d="M9 4.2 v5 q0 2.4 -2.2 2.4 q-0.9 0 -1.5 -0.5" fill="none" stroke="#33629f" stroke-width="1.8"/><path d="M3.2 8.6 L6.6 15.4 H-0.2 Z" transform="translate(0.2 0.2)" fill="#f7c244" stroke="#c98a1b" stroke-width="0.9" stroke-linejoin="round"/><rect x="3" y="10.8" width="0.9" height="2.4" fill="#5a3000"/><rect x="3" y="13.8" width="0.9" height="0.9" fill="#5a3000"/></svg><div class="t" style="left:87px;letter-spacing:-0.537px">Ex1_5.java</div></div><div class="row" style="top:234px"><svg style="position:absolute;left:54px;top:4px" width="8" height="12" viewBox="0 0 8 12"><path d="M1.6 1.6 L6 6 L1.6 10.4" fill="none" stroke="#8a8a8a" stroke-width="1.7"/></svg><svg style="overflow:visible;position:absolute;left:66px;top:1px;" width="16" height="16" viewBox="0 0 16 16"><path d="M3.4 1.4 h6.8 l3.2 3.2 v9.8 h-10z" fill="#fbfcfe" stroke="#a38f58" stroke-width="1" stroke-linejoin="round"/>
<path d="M4 10 h8.8 v3.9 h-8.8z" fill="#dde9f6"/>
<path d="M10.2 1.6 v3 h3" fill="#efe2b4" stroke="#a38f58" stroke-width="0.8"/>
<path d="M9 4.2 v5 q0 2.4 -2.2 2.4 q-0.9 0 -1.5 -0.5" fill="none" stroke="#33629f" stroke-width="1.8"/></svg><div class="t" style="left:87px;letter-spacing:-0.537px">Ex1_6.java</div></div><div class="row" style="top:252px"><svg style="position:absolute;left:54px;top:4px" width="8" height="12" viewBox="0 0 8 12"><path d="M1.6 1.6 L6 6 L1.6 10.4" fill="none" stroke="#8a8a8a" stroke-width="1.7"/></svg><svg style="overflow:visible;position:absolute;left:66px;top:1px;" width="16" height="16" viewBox="0 0 16 16"><path d="M3.4 1.4 h6.8 l3.2 3.2 v9.8 h-10z" fill="#fbfcfe" stroke="#a38f58" stroke-width="1" stroke-linejoin="round"/>
<path d="M4 10 h8.8 v3.9 h-8.8z" fill="#dde9f6"/>
<path d="M10.2 1.6 v3 h3" fill="#efe2b4" stroke="#a38f58" stroke-width="0.8"/>
<path d="M9 4.2 v5 q0 2.4 -2.2 2.4 q-0.9 0 -1.5 -0.5" fill="none" stroke="#33629f" stroke-width="1.8"/><path d="M3.2 8.6 L6.6 15.4 H-0.2 Z" transform="translate(0.2 0.2)" fill="#f7c244" stroke="#c98a1b" stroke-width="0.9" stroke-linejoin="round"/><rect x="3" y="10.8" width="0.9" height="2.4" fill="#5a3000"/><rect x="3" y="13.8" width="0.9" height="0.9" fill="#5a3000"/></svg><div class="t" style="left:87px;letter-spacing:-0.537px">Ex1_7.java</div></div><div class="row" style="top:270px"><svg style="position:absolute;left:54px;top:4px" width="8" height="12" viewBox="0 0 8 12"><path d="M1.6 1.6 L6 6 L1.6 10.4" fill="none" stroke="#8a8a8a" stroke-width="1.7"/></svg><svg style="overflow:visible;position:absolute;left:66px;top:1px;" width="16" height="16" viewBox="0 0 16 16"><path d="M3.4 1.4 h6.8 l3.2 3.2 v9.8 h-10z" fill="#fbfcfe" stroke="#a38f58" stroke-width="1" stroke-linejoin="round"/>
<path d="M4 10 h8.8 v3.9 h-8.8z" fill="#dde9f6"/>
<path d="M10.2 1.6 v3 h3" fill="#efe2b4" stroke="#a38f58" stroke-width="0.8"/>
<path d="M9 4.2 v5 q0 2.4 -2.2 2.4 q-0.9 0 -1.5 -0.5" fill="none" stroke="#33629f" stroke-width="1.8"/><path d="M3.2 8.6 L6.6 15.4 H-0.2 Z" transform="translate(0.2 0.2)" fill="#f7c244" stroke="#c98a1b" stroke-width="0.9" stroke-linejoin="round"/><rect x="3" y="10.8" width="0.9" height="2.4" fill="#5a3000"/><rect x="3" y="13.8" width="0.9" height="0.9" fill="#5a3000"/></svg><div class="t" style="left:87px;letter-spacing:-0.428px">Ex1.java</div></div><div class="row" style="top:288px"><svg style="position:absolute;left:54px;top:4px" width="8" height="12" viewBox="0 0 8 12"><path d="M1.6 1.6 L6 6 L1.6 10.4" fill="none" stroke="#8a8a8a" stroke-width="1.7"/></svg><svg style="overflow:visible;position:absolute;left:66px;top:1px;" width="16" height="16" viewBox="0 0 16 16"><path d="M3.4 1.4 h6.8 l3.2 3.2 v9.8 h-10z" fill="#fbfcfe" stroke="#a38f58" stroke-width="1" stroke-linejoin="round"/>
<path d="M4 10 h8.8 v3.9 h-8.8z" fill="#dde9f6"/>
<path d="M10.2 1.6 v3 h3" fill="#efe2b4" stroke="#a38f58" stroke-width="0.8"/>
<path d="M9 4.2 v5 q0 2.4 -2.2 2.4 q-0.9 0 -1.5 -0.5" fill="none" stroke="#33629f" stroke-width="1.8"/></svg><div class="t" style="left:87px;letter-spacing:-0.44px">Ex10_1.java</div></div><div class="row" style="top:306px"><svg style="position:absolute;left:54px;top:4px" width="8" height="12" viewBox="0 0 8 12"><path d="M1.6 1.6 L6 6 L1.6 10.4" fill="none" stroke="#8a8a8a" stroke-width="1.7"/></svg><svg style="overflow:visible;position:absolute;left:66px;top:1px;" width="16" height="16" viewBox="0 0 16 16"><path d="M3.4 1.4 h6.8 l3.2 3.2 v9.8 h-10z" fill="#fbfcfe" stroke="#a38f58" stroke-width="1" stroke-linejoin="round"/>
<path d="M4 10 h8.8 v3.9 h-8.8z" fill="#dde9f6"/>
<path d="M10.2 1.6 v3 h3" fill="#efe2b4" stroke="#a38f58" stroke-width="0.8"/>
<path d="M9 4.2 v5 q0 2.4 -2.2 2.4 q-0.9 0 -1.5 -0.5" fill="none" stroke="#33629f" stroke-width="1.8"/></svg><div class="t" style="left:87px;letter-spacing:-0.44px">Ex10_2.java</div></div><div class="row" style="top:324px"><div class="abs" style="left:64.2px;top:0.5px;width:86.6px;height:17.4px;background:#d8d8d8;border-radius:3px"></div><svg style="position:absolute;left:54px;top:4px" width="8" height="12" viewBox="0 0 8 12"><path d="M1.6 1.6 L6 6 L1.6 10.4" fill="none" stroke="#8a8a8a" stroke-width="1.7"/></svg><svg style="overflow:visible;position:absolute;left:66px;top:1px;" width="16" height="16" viewBox="0 0 16 16"><path d="M3.4 1.4 h6.8 l3.2 3.2 v9.8 h-10z" fill="#fbfcfe" stroke="#a38f58" stroke-width="1" stroke-linejoin="round"/>
<path d="M4 10 h8.8 v3.9 h-8.8z" fill="#dde9f6"/>
<path d="M10.2 1.6 v3 h3" fill="#efe2b4" stroke="#a38f58" stroke-width="0.8"/>
<path d="M9 4.2 v5 q0 2.4 -2.2 2.4 q-0.9 0 -1.5 -0.5" fill="none" stroke="#33629f" stroke-width="1.8"/></svg><div class="t" style="left:87px;letter-spacing:-0.44px">Ex10_3.java</div></div><div class="row" style="top:342px"><svg style="position:absolute;left:54px;top:4px" width="8" height="12" viewBox="0 0 8 12"><path d="M1.6 1.6 L6 6 L1.6 10.4" fill="none" stroke="#8a8a8a" stroke-width="1.7"/></svg><svg style="overflow:visible;position:absolute;left:66px;top:1px;" width="16" height="16" viewBox="0 0 16 16"><path d="M3.4 1.4 h6.8 l3.2 3.2 v9.8 h-10z" fill="#fbfcfe" stroke="#a38f58" stroke-width="1" stroke-linejoin="round"/>
<path d="M4 10 h8.8 v3.9 h-8.8z" fill="#dde9f6"/>
<path d="M10.2 1.6 v3 h3" fill="#efe2b4" stroke="#a38f58" stroke-width="0.8"/>
<path d="M9 4.2 v5 q0 2.4 -2.2 2.4 q-0.9 0 -1.5 -0.5" fill="none" stroke="#33629f" stroke-width="1.8"/></svg><div class="t" style="left:87px;letter-spacing:-0.44px">Ex10_4.java</div></div><div class="row" style="top:360px"><svg style="position:absolute;left:54px;top:4px" width="8" height="12" viewBox="0 0 8 12"><path d="M1.6 1.6 L6 6 L1.6 10.4" fill="none" stroke="#8a8a8a" stroke-width="1.7"/></svg><svg style="overflow:visible;position:absolute;left:66px;top:1px;" width="16" height="16" viewBox="0 0 16 16"><path d="M3.4 1.4 h6.8 l3.2 3.2 v9.8 h-10z" fill="#fbfcfe" stroke="#a38f58" stroke-width="1" stroke-linejoin="round"/>
<path d="M4 10 h8.8 v3.9 h-8.8z" fill="#dde9f6"/>
<path d="M10.2 1.6 v3 h3" fill="#efe2b4" stroke="#a38f58" stroke-width="0.8"/>
<path d="M9 4.2 v5 q0 2.4 -2.2 2.4 q-0.9 0 -1.5 -0.5" fill="none" stroke="#33629f" stroke-width="1.8"/></svg><div class="t" style="left:87px;letter-spacing:-0.44px">Ex10_5.java</div></div><div class="row" style="top:378px"><svg style="position:absolute;left:54px;top:4px" width="8" height="12" viewBox="0 0 8 12"><path d="M1.6 1.6 L6 6 L1.6 10.4" fill="none" stroke="#8a8a8a" stroke-width="1.7"/></svg><svg style="overflow:visible;position:absolute;left:66px;top:1px;" width="16" height="16" viewBox="0 0 16 16"><path d="M3.4 1.4 h6.8 l3.2 3.2 v9.8 h-10z" fill="#fbfcfe" stroke="#a38f58" stroke-width="1" stroke-linejoin="round"/>
<path d="M4 10 h8.8 v3.9 h-8.8z" fill="#dde9f6"/>
<path d="M10.2 1.6 v3 h3" fill="#efe2b4" stroke="#a38f58" stroke-width="0.8"/>
<path d="M9 4.2 v5 q0 2.4 -2.2 2.4 q-0.9 0 -1.5 -0.5" fill="none" stroke="#33629f" stroke-width="1.8"/></svg><div class="t" style="left:87px;letter-spacing:-0.537px">Ex2_1.java</div></div><div class="row" style="top:396px"><svg style="position:absolute;left:54px;top:4px" width="8" height="12" viewBox="0 0 8 12"><path d="M1.6 1.6 L6 6 L1.6 10.4" fill="none" stroke="#8a8a8a" stroke-width="1.7"/></svg><svg style="overflow:visible;position:absolute;left:66px;top:1px;" width="16" height="16" viewBox="0 0 16 16"><path d="M3.4 1.4 h6.8 l3.2 3.2 v9.8 h-10z" fill="#fbfcfe" stroke="#a38f58" stroke-width="1" stroke-linejoin="round"/>
<path d="M4 10 h8.8 v3.9 h-8.8z" fill="#dde9f6"/>
<path d="M10.2 1.6 v3 h3" fill="#efe2b4" stroke="#a38f58" stroke-width="0.8"/>
<path d="M9 4.2 v5 q0 2.4 -2.2 2.4 q-0.9 0 -1.5 -0.5" fill="none" stroke="#33629f" stroke-width="1.8"/></svg><div class="t" style="left:87px;letter-spacing:-0.537px">Ex2_2.java</div></div><div class="row" style="top:414px"><svg style="position:absolute;left:54px;top:4px" width="8" height="12" viewBox="0 0 8 12"><path d="M1.6 1.6 L6 6 L1.6 10.4" fill="none" stroke="#8a8a8a" stroke-width="1.7"/></svg><svg style="overflow:visible;position:absolute;left:66px;top:1px;" width="16" height="16" viewBox="0 0 16 16"><path d="M3.4 1.4 h6.8 l3.2 3.2 v9.8 h-10z" fill="#fbfcfe" stroke="#a38f58" stroke-width="1" stroke-linejoin="round"/>
<path d="M4 10 h8.8 v3.9 h-8.8z" fill="#dde9f6"/>
<path d="M10.2 1.6 v3 h3" fill="#efe2b4" stroke="#a38f58" stroke-width="0.8"/>
<path d="M9 4.2 v5 q0 2.4 -2.2 2.4 q-0.9 0 -1.5 -0.5" fill="none" stroke="#33629f" stroke-width="1.8"/><path d="M3.2 8.6 L6.6 15.4 H-0.2 Z" transform="translate(0.2 0.2)" fill="#f7c244" stroke="#c98a1b" stroke-width="0.9" stroke-linejoin="round"/><rect x="3" y="10.8" width="0.9" height="2.4" fill="#5a3000"/><rect x="3" y="13.8" width="0.9" height="0.9" fill="#5a3000"/></svg><div class="t" style="left:87px;letter-spacing:-0.537px">Ex2_3.java</div></div><div class="row" style="top:432px"><svg style="position:absolute;left:54px;top:4px" width="8" height="12" viewBox="0 0 8 12"><path d="M1.6 1.6 L6 6 L1.6 10.4" fill="none" stroke="#8a8a8a" stroke-width="1.7"/></svg><svg style="overflow:visible;position:absolute;left:66px;top:1px;" width="16" height="16" viewBox="0 0 16 16"><path d="M3.4 1.4 h6.8 l3.2 3.2 v9.8 h-10z" fill="#fbfcfe" stroke="#a38f58" stroke-width="1" stroke-linejoin="round"/>
<path d="M4 10 h8.8 v3.9 h-8.8z" fill="#dde9f6"/>
<path d="M10.2 1.6 v3 h3" fill="#efe2b4" stroke="#a38f58" stroke-width="0.8"/>
<path d="M9 4.2 v5 q0 2.4 -2.2 2.4 q-0.9 0 -1.5 -0.5" fill="none" stroke="#33629f" stroke-width="1.8"/></svg><div class="t" style="left:87px;letter-spacing:-0.537px">Ex2_4.java</div></div><div class="row" style="top:450px"><svg style="position:absolute;left:54px;top:4px" width="8" height="12" viewBox="0 0 8 12"><path d="M1.6 1.6 L6 6 L1.6 10.4" fill="none" stroke="#8a8a8a" stroke-width="1.7"/></svg><svg style="overflow:visible;position:absolute;left:66px;top:1px;" width="16" height="16" viewBox="0 0 16 16"><path d="M3.4 1.4 h6.8 l3.2 3.2 v9.8 h-10z" fill="#fbfcfe" stroke="#a38f58" stroke-width="1" stroke-linejoin="round"/>
<path d="M4 10 h8.8 v3.9 h-8.8z" fill="#dde9f6"/>
<path d="M10.2 1.6 v3 h3" fill="#efe2b4" stroke="#a38f58" stroke-width="0.8"/>
<path d="M9 4.2 v5 q0 2.4 -2.2 2.4 q-0.9 0 -1.5 -0.5" fill="none" stroke="#33629f" stroke-width="1.8"/></svg><div class="t" style="left:87px;letter-spacing:-0.537px">Ex2_5.java</div></div><div class="row" style="top:468px"><svg style="position:absolute;left:54px;top:4px" width="8" height="12" viewBox="0 0 8 12"><path d="M1.6 1.6 L6 6 L1.6 10.4" fill="none" stroke="#8a8a8a" stroke-width="1.7"/></svg><svg style="overflow:visible;position:absolute;left:66px;top:1px;" width="16" height="16" viewBox="0 0 16 16"><path d="M3.4 1.4 h6.8 l3.2 3.2 v9.8 h-10z" fill="#fbfcfe" stroke="#a38f58" stroke-width="1" stroke-linejoin="round"/>
<path d="M4 10 h8.8 v3.9 h-8.8z" fill="#dde9f6"/>
<path d="M10.2 1.6 v3 h3" fill="#efe2b4" stroke="#a38f58" stroke-width="0.8"/>
<path d="M9 4.2 v5 q0 2.4 -2.2 2.4 q-0.9 0 -1.5 -0.5" fill="none" stroke="#33629f" stroke-width="1.8"/><path d="M3.2 8.6 L6.6 15.4 H-0.2 Z" transform="translate(0.2 0.2)" fill="#f7c244" stroke="#c98a1b" stroke-width="0.9" stroke-linejoin="round"/><rect x="3" y="10.8" width="0.9" height="2.4" fill="#5a3000"/><rect x="3" y="13.8" width="0.9" height="0.9" fill="#5a3000"/></svg><div class="t" style="left:87px;letter-spacing:-0.537px">Ex2_6.java</div></div><div class="row" style="top:486px"><svg style="position:absolute;left:54px;top:4px" width="8" height="12" viewBox="0 0 8 12"><path d="M1.6 1.6 L6 6 L1.6 10.4" fill="none" stroke="#8a8a8a" stroke-width="1.7"/></svg><svg style="overflow:visible;position:absolute;left:66px;top:1px;" width="16" height="16" viewBox="0 0 16 16"><path d="M3.4 1.4 h6.8 l3.2 3.2 v9.8 h-10z" fill="#fbfcfe" stroke="#a38f58" stroke-width="1" stroke-linejoin="round"/>
<path d="M4 10 h8.8 v3.9 h-8.8z" fill="#dde9f6"/>
<path d="M10.2 1.6 v3 h3" fill="#efe2b4" stroke="#a38f58" stroke-width="0.8"/>
<path d="M9 4.2 v5 q0 2.4 -2.2 2.4 q-0.9 0 -1.5 -0.5" fill="none" stroke="#33629f" stroke-width="1.8"/></svg><div class="t" style="left:87px;letter-spacing:-0.537px">Ex2_7.java</div></div><div class="row" style="top:504px"><svg style="position:absolute;left:54px;top:4px" width="8" height="12" viewBox="0 0 8 12"><path d="M1.6 1.6 L6 6 L1.6 10.4" fill="none" stroke="#8a8a8a" stroke-width="1.7"/></svg><svg style="overflow:visible;position:absolute;left:66px;top:1px;" width="16" height="16" viewBox="0 0 16 16"><path d="M3.4 1.4 h6.8 l3.2 3.2 v9.8 h-10z" fill="#fbfcfe" stroke="#a38f58" stroke-width="1" stroke-linejoin="round"/>
<path d="M4 10 h8.8 v3.9 h-8.8z" fill="#dde9f6"/>
<path d="M10.2 1.6 v3 h3" fill="#efe2b4" stroke="#a38f58" stroke-width="0.8"/>
<path d="M9 4.2 v5 q0 2.4 -2.2 2.4 q-0.9 0 -1.5 -0.5" fill="none" stroke="#33629f" stroke-width="1.8"/></svg><div class="t" style="left:87px;letter-spacing:-0.428px">Ex2.java</div></div><div class="row" style="top:522px"><svg style="position:absolute;left:54px;top:4px" width="8" height="12" viewBox="0 0 8 12"><path d="M1.6 1.6 L6 6 L1.6 10.4" fill="none" stroke="#8a8a8a" stroke-width="1.7"/></svg><svg style="overflow:visible;position:absolute;left:66px;top:1px;" width="16" height="16" viewBox="0 0 16 16"><path d="M3.4 1.4 h6.8 l3.2 3.2 v9.8 h-10z" fill="#fbfcfe" stroke="#a38f58" stroke-width="1" stroke-linejoin="round"/>
<path d="M4 10 h8.8 v3.9 h-8.8z" fill="#dde9f6"/>
<path d="M10.2 1.6 v3 h3" fill="#efe2b4" stroke="#a38f58" stroke-width="0.8"/>
<path d="M9 4.2 v5 q0 2.4 -2.2 2.4 q-0.9 0 -1.5 -0.5" fill="none" stroke="#33629f" stroke-width="1.8"/></svg><div class="t" style="left:87px;letter-spacing:-0.537px">Ex3_1.java</div></div><div class="row" style="top:540px"><svg style="position:absolute;left:54px;top:4px" width="8" height="12" viewBox="0 0 8 12"><path d="M1.6 1.6 L6 6 L1.6 10.4" fill="none" stroke="#8a8a8a" stroke-width="1.7"/></svg><svg style="overflow:visible;position:absolute;left:66px;top:1px;" width="16" height="16" viewBox="0 0 16 16"><path d="M3.4 1.4 h6.8 l3.2 3.2 v9.8 h-10z" fill="#fbfcfe" stroke="#a38f58" stroke-width="1" stroke-linejoin="round"/>
<path d="M4 10 h8.8 v3.9 h-8.8z" fill="#dde9f6"/>
<path d="M10.2 1.6 v3 h3" fill="#efe2b4" stroke="#a38f58" stroke-width="0.8"/>
<path d="M9 4.2 v5 q0 2.4 -2.2 2.4 q-0.9 0 -1.5 -0.5" fill="none" stroke="#33629f" stroke-width="1.8"/></svg><div class="t" style="left:87px;letter-spacing:-0.537px">Ex3_2.java</div></div><div class="row" style="top:558px"><svg style="position:absolute;left:54px;top:4px" width="8" height="12" viewBox="0 0 8 12"><path d="M1.6 1.6 L6 6 L1.6 10.4" fill="none" stroke="#8a8a8a" stroke-width="1.7"/></svg><svg style="overflow:visible;position:absolute;left:66px;top:1px;" width="16" height="16" viewBox="0 0 16 16"><path d="M3.4 1.4 h6.8 l3.2 3.2 v9.8 h-10z" fill="#fbfcfe" stroke="#a38f58" stroke-width="1" stroke-linejoin="round"/>
<path d="M4 10 h8.8 v3.9 h-8.8z" fill="#dde9f6"/>
<path d="M10.2 1.6 v3 h3" fill="#efe2b4" stroke="#a38f58" stroke-width="0.8"/>
<path d="M9 4.2 v5 q0 2.4 -2.2 2.4 q-0.9 0 -1.5 -0.5" fill="none" stroke="#33629f" stroke-width="1.8"/></svg><div class="t" style="left:87px;letter-spacing:-0.537px">Ex3_3.java</div></div><div class="row" style="top:576px"><svg style="position:absolute;left:54px;top:4px" width="8" height="12" viewBox="0 0 8 12"><path d="M1.6 1.6 L6 6 L1.6 10.4" fill="none" stroke="#8a8a8a" stroke-width="1.7"/></svg><svg style="overflow:visible;position:absolute;left:66px;top:1px;" width="16" height="16" viewBox="0 0 16 16"><path d="M3.4 1.4 h6.8 l3.2 3.2 v9.8 h-10z" fill="#fbfcfe" stroke="#a38f58" stroke-width="1" stroke-linejoin="round"/>
<path d="M4 10 h8.8 v3.9 h-8.8z" fill="#dde9f6"/>
<path d="M10.2 1.6 v3 h3" fill="#efe2b4" stroke="#a38f58" stroke-width="0.8"/>
<path d="M9 4.2 v5 q0 2.4 -2.2 2.4 q-0.9 0 -1.5 -0.5" fill="none" stroke="#33629f" stroke-width="1.8"/></svg><div class="t" style="left:87px;letter-spacing:-0.537px">Ex3_4.java</div></div><div class="row" style="top:594px"><svg style="position:absolute;left:54px;top:4px" width="8" height="12" viewBox="0 0 8 12"><path d="M1.6 1.6 L6 6 L1.6 10.4" fill="none" stroke="#8a8a8a" stroke-width="1.7"/></svg><svg style="overflow:visible;position:absolute;left:66px;top:1px;" width="16" height="16" viewBox="0 0 16 16"><path d="M3.4 1.4 h6.8 l3.2 3.2 v9.8 h-10z" fill="#fbfcfe" stroke="#a38f58" stroke-width="1" stroke-linejoin="round"/>
<path d="M4 10 h8.8 v3.9 h-8.8z" fill="#dde9f6"/>
<path d="M10.2 1.6 v3 h3" fill="#efe2b4" stroke="#a38f58" stroke-width="0.8"/>
<path d="M9 4.2 v5 q0 2.4 -2.2 2.4 q-0.9 0 -1.5 -0.5" fill="none" stroke="#33629f" stroke-width="1.8"/></svg><div class="t" style="left:87px;letter-spacing:-0.537px">Ex3_5.java</div></div><div class="row" style="top:612px"><svg style="position:absolute;left:54px;top:4px" width="8" height="12" viewBox="0 0 8 12"><path d="M1.6 1.6 L6 6 L1.6 10.4" fill="none" stroke="#8a8a8a" stroke-width="1.7"/></svg><svg style="overflow:visible;position:absolute;left:66px;top:1px;" width="16" height="16" viewBox="0 0 16 16"><path d="M3.4 1.4 h6.8 l3.2 3.2 v9.8 h-10z" fill="#fbfcfe" stroke="#a38f58" stroke-width="1" stroke-linejoin="round"/>
<path d="M4 10 h8.8 v3.9 h-8.8z" fill="#dde9f6"/>
<path d="M10.2 1.6 v3 h3" fill="#efe2b4" stroke="#a38f58" stroke-width="0.8"/>
<path d="M9 4.2 v5 q0 2.4 -2.2 2.4 q-0.9 0 -1.5 -0.5" fill="none" stroke="#33629f" stroke-width="1.8"/></svg><div class="t" style="left:87px;letter-spacing:-0.537px">Ex3_6.java</div></div><div class="row" style="top:630px"><svg style="position:absolute;left:54px;top:4px" width="8" height="12" viewBox="0 0 8 12"><path d="M1.6 1.6 L6 6 L1.6 10.4" fill="none" stroke="#8a8a8a" stroke-width="1.7"/></svg><svg style="overflow:visible;position:absolute;left:66px;top:1px;" width="16" height="16" viewBox="0 0 16 16"><path d="M3.4 1.4 h6.8 l3.2 3.2 v9.8 h-10z" fill="#fbfcfe" stroke="#a38f58" stroke-width="1" stroke-linejoin="round"/>
<path d="M4 10 h8.8 v3.9 h-8.8z" fill="#dde9f6"/>
<path d="M10.2 1.6 v3 h3" fill="#efe2b4" stroke="#a38f58" stroke-width="0.8"/>
<path d="M9 4.2 v5 q0 2.4 -2.2 2.4 q-0.9 0 -1.5 -0.5" fill="none" stroke="#33629f" stroke-width="1.8"/></svg><div class="t" style="left:87px;letter-spacing:-0.537px">Ex3_7.java</div></div><div class="row" style="top:648px"><svg style="position:absolute;left:54px;top:4px" width="8" height="12" viewBox="0 0 8 12"><path d="M1.6 1.6 L6 6 L1.6 10.4" fill="none" stroke="#8a8a8a" stroke-width="1.7"/></svg><svg style="overflow:visible;position:absolute;left:66px;top:1px;" width="16" height="16" viewBox="0 0 16 16"><path d="M3.4 1.4 h6.8 l3.2 3.2 v9.8 h-10z" fill="#fbfcfe" stroke="#a38f58" stroke-width="1" stroke-linejoin="round"/>
<path d="M4 10 h8.8 v3.9 h-8.8z" fill="#dde9f6"/>
<path d="M10.2 1.6 v3 h3" fill="#efe2b4" stroke="#a38f58" stroke-width="0.8"/>
<path d="M9 4.2 v5 q0 2.4 -2.2 2.4 q-0.9 0 -1.5 -0.5" fill="none" stroke="#33629f" stroke-width="1.8"/></svg><div class="t" style="left:87px;letter-spacing:-0.537px">Ex4_1.java</div></div><div class="row" style="top:666px"><svg style="position:absolute;left:54px;top:4px" width="8" height="12" viewBox="0 0 8 12"><path d="M1.6 1.6 L6 6 L1.6 10.4" fill="none" stroke="#8a8a8a" stroke-width="1.7"/></svg><svg style="overflow:visible;position:absolute;left:66px;top:1px;" width="16" height="16" viewBox="0 0 16 16"><path d="M3.4 1.4 h6.8 l3.2 3.2 v9.8 h-10z" fill="#fbfcfe" stroke="#a38f58" stroke-width="1" stroke-linejoin="round"/>
<path d="M4 10 h8.8 v3.9 h-8.8z" fill="#dde9f6"/>
<path d="M10.2 1.6 v3 h3" fill="#efe2b4" stroke="#a38f58" stroke-width="0.8"/>
<path d="M9 4.2 v5 q0 2.4 -2.2 2.4 q-0.9 0 -1.5 -0.5" fill="none" stroke="#33629f" stroke-width="1.8"/></svg><div class="t" style="left:87px;letter-spacing:-0.537px">Ex4_2.java</div></div><div class="row" style="top:684px"><svg style="position:absolute;left:54px;top:4px" width="8" height="12" viewBox="0 0 8 12"><path d="M1.6 1.6 L6 6 L1.6 10.4" fill="none" stroke="#8a8a8a" stroke-width="1.7"/></svg><svg style="overflow:visible;position:absolute;left:66px;top:1px;" width="16" height="16" viewBox="0 0 16 16"><path d="M3.4 1.4 h6.8 l3.2 3.2 v9.8 h-10z" fill="#fbfcfe" stroke="#a38f58" stroke-width="1" stroke-linejoin="round"/>
<path d="M4 10 h8.8 v3.9 h-8.8z" fill="#dde9f6"/>
<path d="M10.2 1.6 v3 h3" fill="#efe2b4" stroke="#a38f58" stroke-width="0.8"/>
<path d="M9 4.2 v5 q0 2.4 -2.2 2.4 q-0.9 0 -1.5 -0.5" fill="none" stroke="#33629f" stroke-width="1.8"/></svg><div class="t" style="left:87px;letter-spacing:-0.537px">Ex4_3.java</div></div><div class="row" style="top:702px"><svg style="position:absolute;left:54px;top:4px" width="8" height="12" viewBox="0 0 8 12"><path d="M1.6 1.6 L6 6 L1.6 10.4" fill="none" stroke="#8a8a8a" stroke-width="1.7"/></svg><svg style="overflow:visible;position:absolute;left:66px;top:1px;" width="16" height="16" viewBox="0 0 16 16"><path d="M3.4 1.4 h6.8 l3.2 3.2 v9.8 h-10z" fill="#fbfcfe" stroke="#a38f58" stroke-width="1" stroke-linejoin="round"/>
<path d="M4 10 h8.8 v3.9 h-8.8z" fill="#dde9f6"/>
<path d="M10.2 1.6 v3 h3" fill="#efe2b4" stroke="#a38f58" stroke-width="0.8"/>
<path d="M9 4.2 v5 q0 2.4 -2.2 2.4 q-0.9 0 -1.5 -0.5" fill="none" stroke="#33629f" stroke-width="1.8"/></svg><div class="t" style="left:87px;letter-spacing:-0.537px">Ex4_4.java</div></div><div class="row" style="top:720px"><svg style="position:absolute;left:54px;top:4px" width="8" height="12" viewBox="0 0 8 12"><path d="M1.6 1.6 L6 6 L1.6 10.4" fill="none" stroke="#8a8a8a" stroke-width="1.7"/></svg><svg style="overflow:visible;position:absolute;left:66px;top:1px;" width="16" height="16" viewBox="0 0 16 16"><path d="M3.4 1.4 h6.8 l3.2 3.2 v9.8 h-10z" fill="#fbfcfe" stroke="#a38f58" stroke-width="1" stroke-linejoin="round"/>
<path d="M4 10 h8.8 v3.9 h-8.8z" fill="#dde9f6"/>
<path d="M10.2 1.6 v3 h3" fill="#efe2b4" stroke="#a38f58" stroke-width="0.8"/>
<path d="M9 4.2 v5 q0 2.4 -2.2 2.4 q-0.9 0 -1.5 -0.5" fill="none" stroke="#33629f" stroke-width="1.8"/></svg><div class="t" style="left:87px;letter-spacing:-0.537px">Ex4_5.java</div></div><div class="row" style="top:738px"><svg style="position:absolute;left:54px;top:4px" width="8" height="12" viewBox="0 0 8 12"><path d="M1.6 1.6 L6 6 L1.6 10.4" fill="none" stroke="#8a8a8a" stroke-width="1.7"/></svg><svg style="overflow:visible;position:absolute;left:66px;top:1px;" width="16" height="16" viewBox="0 0 16 16"><path d="M3.4 1.4 h6.8 l3.2 3.2 v9.8 h-10z" fill="#fbfcfe" stroke="#a38f58" stroke-width="1" stroke-linejoin="round"/>
<path d="M4 10 h8.8 v3.9 h-8.8z" fill="#dde9f6"/>
<path d="M10.2 1.6 v3 h3" fill="#efe2b4" stroke="#a38f58" stroke-width="0.8"/>
<path d="M9 4.2 v5 q0 2.4 -2.2 2.4 q-0.9 0 -1.5 -0.5" fill="none" stroke="#33629f" stroke-width="1.8"/></svg><div class="t" style="left:87px;letter-spacing:-0.537px">Ex5_1.java</div></div><div class="row" style="top:756px"><svg style="position:absolute;left:54px;top:4px" width="8" height="12" viewBox="0 0 8 12"><path d="M1.6 1.6 L6 6 L1.6 10.4" fill="none" stroke="#8a8a8a" stroke-width="1.7"/></svg><svg style="overflow:visible;position:absolute;left:66px;top:1px;" width="16" height="16" viewBox="0 0 16 16"><path d="M3.4 1.4 h6.8 l3.2 3.2 v9.8 h-10z" fill="#fbfcfe" stroke="#a38f58" stroke-width="1" stroke-linejoin="round"/>
<path d="M4 10 h8.8 v3.9 h-8.8z" fill="#dde9f6"/>
<path d="M10.2 1.6 v3 h3" fill="#efe2b4" stroke="#a38f58" stroke-width="0.8"/>
<path d="M9 4.2 v5 q0 2.4 -2.2 2.4 q-0.9 0 -1.5 -0.5" fill="none" stroke="#33629f" stroke-width="1.8"/></svg><div class="t" style="left:87px;letter-spacing:-0.537px">Ex5_2.java</div></div><div class="row" style="top:774px"><svg style="position:absolute;left:54px;top:4px" width="8" height="12" viewBox="0 0 8 12"><path d="M1.6 1.6 L6 6 L1.6 10.4" fill="none" stroke="#8a8a8a" stroke-width="1.7"/></svg><svg style="overflow:visible;position:absolute;left:66px;top:1px;" width="16" height="16" viewBox="0 0 16 16"><path d="M3.4 1.4 h6.8 l3.2 3.2 v9.8 h-10z" fill="#fbfcfe" stroke="#a38f58" stroke-width="1" stroke-linejoin="round"/>
<path d="M4 10 h8.8 v3.9 h-8.8z" fill="#dde9f6"/>
<path d="M10.2 1.6 v3 h3" fill="#efe2b4" stroke="#a38f58" stroke-width="0.8"/>
<path d="M9 4.2 v5 q0 2.4 -2.2 2.4 q-0.9 0 -1.5 -0.5" fill="none" stroke="#33629f" stroke-width="1.8"/></svg><div class="t" style="left:87px;letter-spacing:-0.537px">Ex5_3.java</div></div><div class="row" style="top:792px"><svg style="position:absolute;left:54px;top:4px" width="8" height="12" viewBox="0 0 8 12"><path d="M1.6 1.6 L6 6 L1.6 10.4" fill="none" stroke="#8a8a8a" stroke-width="1.7"/></svg><svg style="overflow:visible;position:absolute;left:66px;top:1px;" width="16" height="16" viewBox="0 0 16 16"><path d="M3.4 1.4 h6.8 l3.2 3.2 v9.8 h-10z" fill="#fbfcfe" stroke="#a38f58" stroke-width="1" stroke-linejoin="round"/>
<path d="M4 10 h8.8 v3.9 h-8.8z" fill="#dde9f6"/>
<path d="M10.2 1.6 v3 h3" fill="#efe2b4" stroke="#a38f58" stroke-width="0.8"/>
<path d="M9 4.2 v5 q0 2.4 -2.2 2.4 q-0.9 0 -1.5 -0.5" fill="none" stroke="#33629f" stroke-width="1.8"/></svg><div class="t" style="left:87px;letter-spacing:-0.537px">Ex5_4.java</div></div><div class="row" style="top:810px"><svg style="position:absolute;left:54px;top:4px" width="8" height="12" viewBox="0 0 8 12"><path d="M1.6 1.6 L6 6 L1.6 10.4" fill="none" stroke="#8a8a8a" stroke-width="1.7"/></svg><svg style="overflow:visible;position:absolute;left:66px;top:1px;" width="16" height="16" viewBox="0 0 16 16"><path d="M3.4 1.4 h6.8 l3.2 3.2 v9.8 h-10z" fill="#fbfcfe" stroke="#a38f58" stroke-width="1" stroke-linejoin="round"/>
<path d="M4 10 h8.8 v3.9 h-8.8z" fill="#dde9f6"/>
<path d="M10.2 1.6 v3 h3" fill="#efe2b4" stroke="#a38f58" stroke-width="0.8"/>
<path d="M9 4.2 v5 q0 2.4 -2.2 2.4 q-0.9 0 -1.5 -0.5" fill="none" stroke="#33629f" stroke-width="1.8"/></svg><div class="t" style="left:87px;letter-spacing:-0.44px">Ex6_10.java</div></div><div class="row" style="top:828px"><svg style="position:absolute;left:54px;top:4px" width="8" height="12" viewBox="0 0 8 12"><path d="M1.6 1.6 L6 6 L1.6 10.4" fill="none" stroke="#8a8a8a" stroke-width="1.7"/></svg><svg style="overflow:visible;position:absolute;left:66px;top:1px;" width="16" height="16" viewBox="0 0 16 16"><path d="M3.4 1.4 h6.8 l3.2 3.2 v9.8 h-10z" fill="#fbfcfe" stroke="#a38f58" stroke-width="1" stroke-linejoin="round"/>
<path d="M4 10 h8.8 v3.9 h-8.8z" fill="#dde9f6"/>
<path d="M10.2 1.6 v3 h3" fill="#efe2b4" stroke="#a38f58" stroke-width="0.8"/>
<path d="M9 4.2 v5 q0 2.4 -2.2 2.4 q-0.9 0 -1.5 -0.5" fill="none" stroke="#33629f" stroke-width="1.8"/></svg><div class="t" style="left:87px;letter-spacing:-0.36px">Ex6_11.java</div></div><div class="row" style="top:846px"><svg style="position:absolute;left:54px;top:4px" width="8" height="12" viewBox="0 0 8 12"><path d="M1.6 1.6 L6 6 L1.6 10.4" fill="none" stroke="#8a8a8a" stroke-width="1.7"/></svg><svg style="overflow:visible;position:absolute;left:66px;top:1px;" width="16" height="16" viewBox="0 0 16 16"><path d="M3.4 1.4 h6.8 l3.2 3.2 v9.8 h-10z" fill="#fbfcfe" stroke="#a38f58" stroke-width="1" stroke-linejoin="round"/>
<path d="M4 10 h8.8 v3.9 h-8.8z" fill="#dde9f6"/>
<path d="M10.2 1.6 v3 h3" fill="#efe2b4" stroke="#a38f58" stroke-width="0.8"/>
<path d="M9 4.2 v5 q0 2.4 -2.2 2.4 q-0.9 0 -1.5 -0.5" fill="none" stroke="#33629f" stroke-width="1.8"/></svg><div class="t" style="left:87px;letter-spacing:-0.44px">Ex6_12.java</div></div><div class="row" style="top:864px"><svg style="position:absolute;left:54px;top:4px" width="8" height="12" viewBox="0 0 8 12"><path d="M1.6 1.6 L6 6 L1.6 10.4" fill="none" stroke="#8a8a8a" stroke-width="1.7"/></svg><svg style="overflow:visible;position:absolute;left:66px;top:1px;" width="16" height="16" viewBox="0 0 16 16"><path d="M3.4 1.4 h6.8 l3.2 3.2 v9.8 h-10z" fill="#fbfcfe" stroke="#a38f58" stroke-width="1" stroke-linejoin="round"/>
<path d="M4 10 h8.8 v3.9 h-8.8z" fill="#dde9f6"/>
<path d="M10.2 1.6 v3 h3" fill="#efe2b4" stroke="#a38f58" stroke-width="0.8"/>
<path d="M9 4.2 v5 q0 2.4 -2.2 2.4 q-0.9 0 -1.5 -0.5" fill="none" stroke="#33629f" stroke-width="1.8"/></svg><div class="t" style="left:87px;letter-spacing:-0.44px">Ex6_13.java</div></div></div><div class="abs" style="left:360px;top:97px;width:16px;height:869px;background:#f0f0f0"></div><div class="abs" style="left:367px;top:114px;width:2px;height:433px;background:#858585"></div><div class="abs" style="left:381px;top:72px;width:917px;height:730px;background:#f6f6f6;border-left:1px solid #dcdcdc;border-bottom:1px solid #dcdcdc"></div><div class="abs" style="left:382px;top:96px;width:916px;height:1px;background:#e2e2e2"></div><svg style="overflow:visible;position:absolute;left:385.7px;top:77px;" width="16" height="16" viewBox="0 0 16 16"><path d="M3.4 1.4 h6.8 l3.2 3.2 v9.8 h-10z" fill="#fbfcfe" stroke="#a38f58" stroke-width="1" stroke-linejoin="round"/>
<path d="M4 10 h8.8 v3.9 h-8.8z" fill="#dde9f6"/>
<path d="M10.2 1.6 v3 h3" fill="#efe2b4" stroke="#a38f58" stroke-width="0.8"/>
<path d="M9 4.2 v5 q0 2.4 -2.2 2.4 q-0.9 0 -1.5 -0.5" fill="none" stroke="#33629f" stroke-width="1.8"/></svg><div class="t" style="left:405.6px;top:77px;letter-spacing:0.204px">module-info....</div><svg style="overflow:visible;position:absolute;left:512.7px;top:77px;" width="16" height="16" viewBox="0 0 16 16"><path d="M3.4 1.4 h6.8 l3.2 3.2 v9.8 h-10z" fill="#fbfcfe" stroke="#a38f58" stroke-width="1" stroke-linejoin="round"/>
<path d="M4 10 h8.8 v3.9 h-8.8z" fill="#dde9f6"/>
<path d="M10.2 1.6 v3 h3" fill="#efe2b4" stroke="#a38f58" stroke-width="0.8"/>
<path d="M9 4.2 v5 q0 2.4 -2.2 2.4 q-0.9 0 -1.5 -0.5" fill="none" stroke="#33629f" stroke-width="1.8"/></svg><div class="t" style="left:534.3px;top:77px;letter-spacing:-0.607px">Ex.java</div><svg style="overflow:visible;position:absolute;left:599.1px;top:77px;" width="16" height="16" viewBox="0 0 16 16"><path d="M3.4 1.4 h6.8 l3.2 3.2 v9.8 h-10z" fill="#fbfcfe" stroke="#a38f58" stroke-width="1" stroke-linejoin="round"/>
<path d="M4 10 h8.8 v3.9 h-8.8z" fill="#dde9f6"/>
<path d="M10.2 1.6 v3 h3" fill="#efe2b4" stroke="#a38f58" stroke-width="0.8"/>
<path d="M9 4.2 v5 q0 2.4 -2.2 2.4 q-0.9 0 -1.5 -0.5" fill="none" stroke="#33629f" stroke-width="1.8"/></svg><div class="t" style="left:620px;top:77px;letter-spacing:-0.378px">Ex1.java</div><svg style="overflow:visible;position:absolute;left:692.7px;top:77px;" width="16" height="16" viewBox="0 0 16 16"><path d="M3.4 1.4 h6.8 l3.2 3.2 v9.8 h-10z" fill="#fbfcfe" stroke="#a38f58" stroke-width="1" stroke-linejoin="round"/>
<path d="M4 10 h8.8 v3.9 h-8.8z" fill="#dde9f6"/>
<path d="M10.2 1.6 v3 h3" fill="#efe2b4" stroke="#a38f58" stroke-width="0.8"/>
<path d="M9 4.2 v5 q0 2.4 -2.2 2.4 q-0.9 0 -1.5 -0.5" fill="none" stroke="#33629f" stroke-width="1.8"/></svg><div class="t" style="left:713.4px;top:77px;letter-spacing:-0.468px">Ex8_14.java</div><svg style="overflow:visible;position:absolute;left:804.7px;top:77px;" width="16" height="16" viewBox="0 0 16 16"><path d="M3.4 1.4 h6.8 l3.2 3.2 v9.8 h-10z" fill="#fbfcfe" stroke="#a38f58" stroke-width="1" stroke-linejoin="round"/>
<path d="M4 10 h8.8 v3.9 h-8.8z" fill="#dde9f6"/>
<path d="M10.2 1.6 v3 h3" fill="#efe2b4" stroke="#a38f58" stroke-width="0.8"/>
<path d="M9 4.2 v5 q0 2.4 -2.2 2.4 q-0.9 0 -1.5 -0.5" fill="none" stroke="#33629f" stroke-width="1.8"/></svg><div class="t" style="left:825.2px;top:77px;letter-spacing:-0.527px">Ex9_1.java</div><svg style="overflow:visible;position:absolute;left:909.7px;top:77px;" width="16" height="16" viewBox="0 0 16 16"><path d="M3.4 1.4 h6.8 l3.2 3.2 v9.8 h-10z" fill="#fbfcfe" stroke="#a38f58" stroke-width="1" stroke-linejoin="round"/>
<path d="M4 10 h8.8 v3.9 h-8.8z" fill="#dde9f6"/>
<path d="M10.2 1.6 v3 h3" fill="#efe2b4" stroke="#a38f58" stroke-width="0.8"/>
<path d="M9 4.2 v5 q0 2.4 -2.2 2.4 q-0.9 0 -1.5 -0.5" fill="none" stroke="#33629f" stroke-width="1.8"/></svg><div class="t" style="left:930.4px;top:77px;letter-spacing:-0.547px">Ex9_2.java</div><svg style="overflow:visible;position:absolute;left:1014.7px;top:77px;" width="16" height="16" viewBox="0 0 16 16"><path d="M3.4 1.4 h6.8 l3.2 3.2 v9.8 h-10z" fill="#fbfcfe" stroke="#a38f58" stroke-width="1" stroke-linejoin="round"/>
<path d="M4 10 h8.8 v3.9 h-8.8z" fill="#dde9f6"/>
<path d="M10.2 1.6 v3 h3" fill="#efe2b4" stroke="#a38f58" stroke-width="0.8"/>
<path d="M9 4.2 v5 q0 2.4 -2.2 2.4 q-0.9 0 -1.5 -0.5" fill="none" stroke="#33629f" stroke-width="1.8"/></svg><div class="t" style="left:1035.4px;top:77px;letter-spacing:-0.537px">Ex9_3.java</div><svg style="overflow:visible;position:absolute;left:1119.7px;top:77px;" width="16" height="16" viewBox="0 0 16 16"><path d="M3.4 1.4 h6.8 l3.2 3.2 v9.8 h-10z" fill="#fbfcfe" stroke="#a38f58" stroke-width="1" stroke-linejoin="round"/>
<path d="M4 10 h8.8 v3.9 h-8.8z" fill="#dde9f6"/>
<path d="M10.2 1.6 v3 h3" fill="#efe2b4" stroke="#a38f58" stroke-width="0.8"/>
<path d="M9 4.2 v5 q0 2.4 -2.2 2.4 q-0.9 0 -1.5 -0.5" fill="none" stroke="#33629f" stroke-width="1.8"/></svg><div class="t" style="left:1140.3px;top:77px;letter-spacing:-0.537px">Ex9_4.java</div><svg style="overflow:visible;position:absolute;left:1224.7px;top:77px;" width="16" height="16" viewBox="0 0 16 16"><path d="M3.4 1.4 h6.8 l3.2 3.2 v9.8 h-10z" fill="#fbfcfe" stroke="#a38f58" stroke-width="1" stroke-linejoin="round"/>
<path d="M4 10 h8.8 v3.9 h-8.8z" fill="#dde9f6"/>
<path d="M10.2 1.6 v3 h3" fill="#efe2b4" stroke="#a38f58" stroke-width="0.8"/>
<path d="M9 4.2 v5 q0 2.4 -2.2 2.4 q-0.9 0 -1.5 -0.5" fill="none" stroke="#33629f" stroke-width="1.8"/></svg><div class="t" style="left:1245px;top:77px;letter-spacing:-0.459px">Ex10_1.java</div><div id="code" class="abs"><div class="abs" style="left:0;top:0;width:12px;height:687px;background:#f8f8f8"></div><div class="abs" style="left:0;top:22px;width:12px;height:594px;background:repeating-conic-gradient(#2470b4 0 25%,#d2f0ff 0 50%) 0 0/2px 2px;border-top:1px solid #2470b4"></div><div class="abs" style="left:44px;top:594px;width:872px;height:22px;background:#e8f2fe"></div><div class="ln" style="top:0px">1</div><div class="cl" style="top:0px"><span class="kw">package</span> org.javaro.lecture;</div><div class="ln" style="top:22px">2</div><div class="cl" style="top:22px"><span class="kw">public</span> <span class="kw">class</span> Ex10_3 {</div><div class="ln" style="top:44px">3</div><div class="cl" style="top:44px">    <span class="kw">public</span> <span class="kw">static</span> <span class="kw">void</span> main(String[] <span class="lv">args</span>) {</div><div class="ln" style="top:66px">4</div><div class="cl" style="top:66px">        <span class="kw">try</span> {</div><div class="abs" style="left:164px;top:88px;width:60px;height:22px;background:#d4d4d4"></div><div class="ln" style="top:88px">5</div><div class="cl" style="top:88px">            <span class="oc">System</span>.<span class="fd">out</span>.println(<span class="st">"<span class="kr" style="width:75px">매개변수로</span> <span class="kr" style="width:30px">받은</span> <span class="kr" style="width:45px">두개의</span> <span class="kr" style="width:15px">값</span>"</span>);</div><div class="ln" style="top:110px">6</div><div class="cl" style="top:110px">            <span class="kw">int</span> <span class="lv">a</span> = Integer.<span class="it">parseInt</span>(<span class="lv">args</span>[0]);</div><div class="ln" style="top:132px">7</div><div class="cl" style="top:132px">            <span class="kw">int</span> <span class="lv">b</span> = Integer.<span class="it">parseInt</span>(<span class="lv">args</span>[1]);</div><div class="abs" style="left:164px;top:154px;width:60px;height:22px;background:#d4d4d4"></div><div class="ln" style="top:154px">8</div><div class="cl" style="top:154px">            <span class="oc">System</span>.<span class="fd">out</span>.println(<span class="st">"a="</span>+<span class="lv">a</span>+<span class="st">",b="</span>+<span class="lv">b</span>);</div><div class="abs" style="left:164px;top:176px;width:60px;height:22px;background:#d4d4d4"></div><div class="ln" style="top:176px">9</div><div class="cl" style="top:176px">            <span class="oc">System</span>.<span class="fd">out</span>.println(<span class="st">"a/b="</span>+(<span class="lv">a</span>/<span class="lv">b</span>));</div><div class="abs" style="left:164px;top:198px;width:60px;height:22px;background:#d4d4d4"></div><div class="ln" style="top:198px">10</div><div class="cl" style="top:198px">            <span class="oc">System</span>.<span class="fd">out</span>.println(<span class="st">"<span class="kr" style="width:45px">나누기</span> <span class="kr" style="width:45px">수행됨</span>"</span>);</div><div class="ln" style="top:220px">11</div><div class="cl" style="top:220px">        }</div><div class="ln" style="top:242px">12</div><div class="cl" style="top:242px">        <span class="kw">catch</span>(ArithmeticException <span class="lv">e</span>) {</div><div class="abs" style="left:164px;top:264px;width:60px;height:22px;background:#d4d4d4"></div><div class="ln" style="top:264px">13</div><div class="cl" style="top:264px">            <span class="oc">System</span>.<span class="fd">out</span>.println(<span class="st">"ArithmeticException <span class="kr" style="width:60px">처리루틴</span>:"</span>);</div><div class="abs" style="left:164px;top:286px;width:60px;height:22px;background:#d4d4d4"></div><div class="ln" style="top:286px">14</div><div class="cl" style="top:286px">            <span class="oc">System</span>.<span class="fd">out</span>.println(<span class="lv">e</span>+<span class="st">"<span class="kr" style="width:60px">예외발생</span>"</span>);</div><div class="ln" style="top:308px">15</div><div class="cl" style="top:308px">        }</div><div class="ln" style="top:330px">16</div><div class="cl" style="top:330px">        <span class="kw">catch</span>(ArrayIndexOutOfBoundsException <span class="lv">e</span>) {</div><div class="abs" style="left:164px;top:352px;width:60px;height:22px;background:#d4d4d4"></div><div class="ln" style="top:352px">17</div><div class="cl" style="top:352px">            <span class="oc">System</span>.<span class="fd">out</span>.println(<span class="st">"ArrayIndexOutOfBoundsException <span class="kr" style="width:60px">처리루틴</span>:"</span>);</div><div class="abs" style="left:164px;top:374px;width:60px;height:22px;background:#d4d4d4"></div><div class="ln" style="top:374px">18</div><div class="cl" style="top:374px">            <span class="oc">System</span>.<span class="fd">out</span>.println(<span class="lv">e</span>+<span class="st">"<span class="kr" style="width:60px">예외발생</span>"</span>);</div><div class="ln" style="top:396px">19</div><div class="cl" style="top:396px">        }</div><div class="ln" style="top:418px">20</div><div class="cl" style="top:418px">        <span class="kw">catch</span>(NumberFormatException <span class="lv">e</span>) {</div><div class="abs" style="left:164px;top:440px;width:60px;height:22px;background:#d4d4d4"></div><div class="ln" style="top:440px">21</div><div class="cl" style="top:440px">            <span class="oc">System</span>.<span class="fd">out</span>.println(<span class="st">"NumberFormatException <span class="kr" style="width:60px">처리루틴</span>:"</span>);</div><div class="abs" style="left:164px;top:462px;width:60px;height:22px;background:#d4d4d4"></div><div class="ln" style="top:462px">22</div><div class="cl" style="top:462px">            <span class="oc">System</span>.<span class="fd">out</span>.println(<span class="lv">e</span>+<span class="st">"<span class="kr" style="width:60px">예외발생</span>"</span>);</div><div class="ln" style="top:484px">23</div><div class="cl" style="top:484px">        }</div><div class="ln" style="top:506px">24</div><div class="cl" style="top:506px">        <span class="kw">finally</span> {</div><div class="abs" style="left:164px;top:528px;width:60px;height:22px;background:#d4d4d4"></div><div class="ln" style="top:528px">25</div><div class="cl" style="top:528px">            <span class="oc">System</span>.<span class="fd">out</span>.println(<span class="st">"<span class="kr" style="width:60px">예외처리</span> <span class="kr" style="width:15px">후</span> finally <span class="kr" style="width:30px">블럭</span> <span class="kr" style="width:45px">수행함</span>"</span>);</div><div class="ln" style="top:550px">26</div><div class="cl" style="top:550px">        }</div><div class="ln" style="top:572px">27</div><div class="cl" style="top:572px">    }</div><div class="ln" style="top:594px">28</div><div class="cl" style="top:594px">}</div><div class="abs" style="left:244px;top:23px;width:11px;height:21px;border:1px solid #6b4c5c"></div><svg class="abs" style="left:31.5px;top:50px" width="10" height="10" viewBox="0 0 10 10"><circle cx="5" cy="5" r="4" fill="#fff" stroke="#8a8a8a" stroke-width="0.9"/><path d="M2.8 5 h4.4" stroke="#6a6a6a" stroke-width="1"/></svg></div><div class="abs" style="left:424px;top:784px;width:874px;height:17px;background:#f0f0f0"></div><svg class="abs" style="left:428px;top:788px" width="8" height="10" viewBox="0 0 8 10"><path d="M7.4 0.6 V9.4 L0.8 5Z" fill="#a6a6a6"/></svg><div class="abs" style="left:381px;top:806px;width:917px;height:160px;background:#e8e8e8;border-left:1px solid #d4d4d4;border-top:1px solid #d8d8d8"></div><div class="abs" style="left:382px;top:807px;width:93px;height:25px;background:#f6f6f6;border-right:1px solid #dadada"></div><svg style="overflow:visible;position:absolute;left:388px;top:813px;" width="13.4" height="13.4" viewBox="0 0 16 16"><rect x="1.2" y="1.6" width="13.2" height="9.6" rx="1.4" fill="#f4f8fd" stroke="#33588f" stroke-width="2.3"/>
<path d="M4 4.8 h7.6 M4 7.4 h5" stroke="#2a4470" stroke-width="1.4"/>
<path d="M5.6 11.6 h4.6 v1.6 h-4.6z M2.8 13.4 h10.2 v1.5 h-10.2z" fill="#33588f"/></svg><div class="t" style="left:405.6px;top:812px;letter-spacing:-0.175px">Console</div><svg style="position:absolute;left:457px;top:815px" width="11" height="11" viewBox="0 0 11 11"><path d="M1 1 L10 10 M10 1 L1 10" stroke="#1a1a1a" stroke-width="1.1"/></svg><div class="abs" style="left:382px;top:832px;width:916px;height:15px;background:#f4f4f4"></div><div class="abs" style="left:382px;top:847px;width:916px;height:1px;background:#8c8c8c"></div><div class="t" style="left:384.6px;top:832px;color:#000;letter-spacing:-0.051px">&lt;terminated&gt;</div><div class="t" style="left:460.9px;top:832px;color:#000;letter-spacing:-0.616px">Ex10_3</div><div class="t" style="left:502.9px;top:832px;color:#000;letter-spacing:-0.336px">[Java</div><div class="t" style="left:532.6px;top:832px;color:#000;letter-spacing:0.122px">Application]</div><div class="t" style="left:601.5px;top:832px;color:#000;letter-spacing:-0.865px">C:₩Users₩</div><div class="t" style="left:659.6px;top:832px;color:#000"><span class="kr2" style="width:33.6px">유지석</span></div><div class="t" style="left:694.6px;top:832px;color:#000;letter-spacing:-0.166px">₩Downloads₩OpenJDK17U-jdk_x64_windows_hotspot_17.0.8.1_1₩jdk-17.0.8.1+1₩bin₩javaw.exe</div><div class="t" style="left:1232px;top:832px;color:#000;letter-spacing:0.116px">(2023. 11. 9.</div><div id="con" class="abs"><div class="co" style="top:1px"><span class="kr" style="width:75px">매개변수로</span> <span class="kr" style="width:30px">받은</span> <span class="kr" style="width:45px">두개의</span> <span class="kr" style="width:15px">값</span></div><div class="co" style="top:23px"><span class="lk">ArrayIndexOutOfBoundsException</span> <span class="kr" style="width:60px">처리루틴</span>:</div><div class="co" style="top:45px"><span class="lk">java.lang.ArrayIndexOutOfBoundsException</span>: Index 1 out of bounds for length 1<span class="kr" style="width:60px">예외발생</span></div><div class="co" style="top:67px"><span class="kr" style="width:60px">예외처리</span> <span class="kr" style="width:15px">후</span> finally <span class="kr" style="width:30px">블럭</span> <span class="kr" style="width:45px">수행함</span></div></div></body></html>
